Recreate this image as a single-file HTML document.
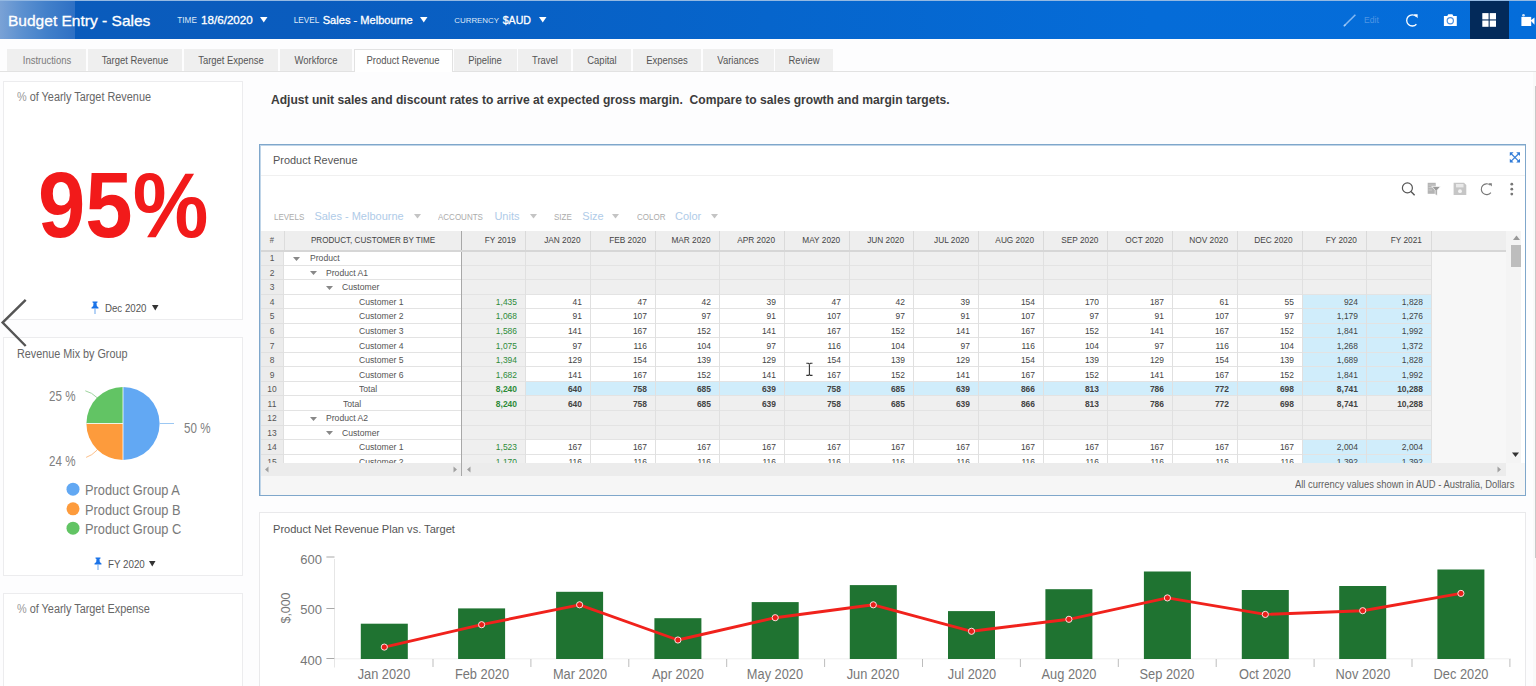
<!DOCTYPE html>
<html><head><meta charset="utf-8"><title>Budget Entry - Sales</title>
<style>
html,body{margin:0;padding:0;}
body{width:1536px;height:686px;overflow:hidden;position:relative;background:#fdfdfe;font-family:"Liberation Sans",sans-serif;color:#444;}
.t{position:absolute;white-space:nowrap;}
.b{position:absolute;box-sizing:border-box;}
svg{position:absolute;overflow:visible;}
</style></head><body>

<div class="b" style="left:0.00px;top:0.00px;width:1536.00px;height:39.00px;background:linear-gradient(90deg,#0a5bbb 0%,#0a5cbe 20%,#0665cc 50%,#056cd8 75%,#046dda 100%);"></div>
<div class="b" style="left:0.00px;top:1.00px;width:75.00px;height:38.00px;background:linear-gradient(90deg,#7aa2d6 0%,#5b90d0 30%,#4280ca 62%,#2e70c4 100%);"></div>
<div class="b" style="left:0.00px;top:0.00px;width:1536.00px;height:1.00px;background:#94b9e2;"></div>
<div class="t" style="left:7.80px;top:12.80px;font-size:15px;line-height:15px;transform:scaleX(1.035);transform-origin:0 0;color:#fff;-webkit-text-stroke:0.3px #fff;">Budget Entry - Sales</div>
<div class="t" style="left:177.30px;top:17.06px;font-size:8.2px;line-height:8.2px;color:#dfe9f7;">TIME</div>
<div class="t" style="left:201.30px;top:14.82px;font-size:11.2px;line-height:11.2px;transform:scaleX(1.04);transform-origin:0 0;color:#fff;-webkit-text-stroke:0.3px #fff;">18/6/2020</div>
<div class="t" style="left:293.80px;top:17.06px;font-size:8.2px;line-height:8.2px;color:#dfe9f7;">LEVEL</div>
<div class="t" style="left:322.70px;top:15.10px;font-size:11.1px;line-height:11.1px;color:#fff;-webkit-text-stroke:0.3px #fff;">Sales - Melbourne</div>
<div class="t" style="left:454.30px;top:17.31px;font-size:7.9px;line-height:7.9px;color:#dfe9f7;">CURRENCY</div>
<div class="t" style="left:502.70px;top:15.23px;font-size:10.6px;line-height:10.6px;color:#fff;-webkit-text-stroke:0.3px #fff;">$AUD</div>
<svg style="left:260px;top:17px" width="8" height="7"><path d="M0 0 L7.5 0 L3.75 5.6 Z" fill="#fff"/></svg>
<svg style="left:420px;top:17px" width="8" height="7"><path d="M0 0 L7.5 0 L3.75 5.6 Z" fill="#fff"/></svg>
<svg style="left:539px;top:17px" width="8" height="7"><path d="M0 0 L7.5 0 L3.75 5.6 Z" fill="#fff"/></svg>
<svg style="left:0;top:0" width="1536" height="40"><path d="M1344.8 25.3 L1355.4 14.7" stroke="#84b8f2" stroke-width="1.6" fill="none"/><path d="M1343.8 26.3 L1345.6 24.5" stroke="#a8cdf6" stroke-width="1.6"/><path d="M1416.2 16.4 A5.6 5.6 0 1 0 1416.4 24.2" stroke="#fff" stroke-width="1.3" fill="none"/><path d="M1413.8 14.3 L1417.6 14.3 L1417.6 18.3 Z" fill="#fff"/><path d="M1443.9 15.9 L1447.3 15.9 L1448.2 14.2 L1452.4 14.2 L1453.3 15.9 L1456.8 15.9 L1456.8 25.9 L1443.9 25.9 Z" fill="#fff"/><circle cx="1450.3" cy="20.7" r="3.7" fill="#4a90e2"/><circle cx="1450.3" cy="20.7" r="2.5" fill="#fff"/></svg>
<div class="t" style="left:1364.00px;top:15.72px;font-size:8.6px;line-height:8.6px;color:#4e95e4;">Edit</div>
<div class="b" style="left:1470.00px;top:1.00px;width:38.50px;height:37.50px;background:#032a5a;"></div>
<svg style="left:0;top:0" width="1536" height="40"><rect x="1482.3" y="13.1" width="6.3" height="6.3" fill="#fff"/><rect x="1489.7" y="13.1" width="6.3" height="6.3" fill="#fff"/><rect x="1482.3" y="20.5" width="6.3" height="6.3" fill="#fff"/><rect x="1489.7" y="20.5" width="6.3" height="6.3" fill="#fff"/><rect x="1521.4" y="16.9" width="9.8" height="9.1" fill="#fff"/><path d="M1530.5 20.5 L1534.5 17.5 L1534.5 24.8 Z" fill="#fff"/><circle cx="1523.5" cy="15.2" r="1.3" fill="#cfe2f8"/></svg>
<div class="b" style="left:0.00px;top:71.00px;width:1536.00px;height:1.00px;background:#e2e2e2;"></div>
<div class="b" style="left:7.00px;top:49.00px;width:79.00px;height:22.00px;background:#efefef;"></div>
<div class="t" style="left:-103.50px;width:300px;text-align:center;top:55.01px;font-size:10.5px;line-height:10.5px;transform:scaleX(0.9);transform-origin:50% 0;color:#7a7a7a;">Instructions</div>
<div class="b" style="left:87.50px;top:49.00px;width:94.00px;height:22.00px;background:#efefef;"></div>
<div class="t" style="left:-15.50px;width:300px;text-align:center;top:55.01px;font-size:10.5px;line-height:10.5px;transform:scaleX(0.9);transform-origin:50% 0;color:#555;">Target Revenue</div>
<div class="b" style="left:184.00px;top:49.00px;width:94.00px;height:22.00px;background:#efefef;"></div>
<div class="t" style="left:81.00px;width:300px;text-align:center;top:55.01px;font-size:10.5px;line-height:10.5px;transform:scaleX(0.9);transform-origin:50% 0;color:#555;">Target Expense</div>
<div class="b" style="left:279.50px;top:49.00px;width:72.00px;height:22.00px;background:#efefef;"></div>
<div class="t" style="left:165.50px;width:300px;text-align:center;top:55.01px;font-size:10.5px;line-height:10.5px;transform:scaleX(0.9);transform-origin:50% 0;color:#555;">Workforce</div>
<div class="b" style="left:353.50px;top:49.00px;width:99.00px;height:23.00px;background:#fff;border:1px solid #e2e2e2;border-bottom:none;"></div>
<div class="t" style="left:253.00px;width:300px;text-align:center;top:55.01px;font-size:10.5px;line-height:10.5px;transform:scaleX(0.9);transform-origin:50% 0;color:#555;">Product Revenue</div>
<div class="b" style="left:454.00px;top:49.00px;width:62.50px;height:22.00px;background:#efefef;"></div>
<div class="t" style="left:335.25px;width:300px;text-align:center;top:55.01px;font-size:10.5px;line-height:10.5px;transform:scaleX(0.9);transform-origin:50% 0;color:#555;">Pipeline</div>
<div class="b" style="left:518.00px;top:49.00px;width:53.00px;height:22.00px;background:#efefef;"></div>
<div class="t" style="left:394.50px;width:300px;text-align:center;top:55.01px;font-size:10.5px;line-height:10.5px;transform:scaleX(0.9);transform-origin:50% 0;color:#555;">Travel</div>
<div class="b" style="left:573.00px;top:49.00px;width:58.00px;height:22.00px;background:#efefef;"></div>
<div class="t" style="left:452.00px;width:300px;text-align:center;top:55.01px;font-size:10.5px;line-height:10.5px;transform:scaleX(0.9);transform-origin:50% 0;color:#555;">Capital</div>
<div class="b" style="left:632.50px;top:49.00px;width:68.50px;height:22.00px;background:#efefef;"></div>
<div class="t" style="left:516.75px;width:300px;text-align:center;top:55.01px;font-size:10.5px;line-height:10.5px;transform:scaleX(0.9);transform-origin:50% 0;color:#555;">Expenses</div>
<div class="b" style="left:703.00px;top:49.00px;width:70.50px;height:22.00px;background:#efefef;"></div>
<div class="t" style="left:588.25px;width:300px;text-align:center;top:55.01px;font-size:10.5px;line-height:10.5px;transform:scaleX(0.9);transform-origin:50% 0;color:#555;">Variances</div>
<div class="b" style="left:775.00px;top:49.00px;width:58.00px;height:22.00px;background:#efefef;"></div>
<div class="t" style="left:654.00px;width:300px;text-align:center;top:55.01px;font-size:10.5px;line-height:10.5px;transform:scaleX(0.9);transform-origin:50% 0;color:#555;">Review</div>
<div class="b" style="left:3.00px;top:81.00px;width:240.00px;height:239.00px;background:#fff;border:1px solid #ececee;"></div>
<div class="t" style="left:17.00px;top:91.04px;font-size:12px;line-height:12px;transform:scaleX(0.906);transform-origin:0 0;color:#666;"><span style="color:#999">%</span> of Yearly Target Revenue</div>
<div class="t" style="left:38.00px;top:157.85px;font-size:93.5px;line-height:93.5px;color:#f21a1a;font-weight:bold;transform:scaleX(0.91);transform-origin:0 0;">95%</div>
<svg style="left:91px;top:301px" width="8" height="14"><path d="M1.5 0.5 L6.5 0.5 L6.5 1.5 L5.5 2 L5.8 5 L7.5 6.5 L7.5 7.6 L0.5 7.6 L0.5 6.5 L2.2 5 L2.5 2 L1.5 1.5 Z" fill="#1a73e8"/><rect x="3.5" y="7.5" width="1" height="5.5" fill="#6aa6ee"/></svg>
<div class="t" style="left:105.20px;top:303.57px;font-size:10.2px;line-height:10.2px;transform:scaleX(0.95);transform-origin:0 0;color:#555;">Dec 2020</div>
<svg style="left:152px;top:305px" width="7" height="6"><path d="M0 0 L6.5 0 L3.25 5.5 Z" fill="#333"/></svg>
<div class="b" style="left:3.00px;top:337.00px;width:240.00px;height:239.00px;background:#fff;border:1px solid #ececee;"></div>
<div class="t" style="left:16.70px;top:347.64px;font-size:12px;line-height:12px;transform:scaleX(0.9);transform-origin:0 0;color:#666;">Revenue Mix by Group</div>
<svg style="left:0px;top:0px" width="250" height="600">
<path d="M123 423.5 L123 386.9 A36.6 36.6 0 0 1 123 460.1 Z" fill="#62a8f3"/>
<path d="M123 423.5 L123 460.1 A36.6 36.6 0 0 1 86.4 423.5 Z" fill="#fd9b3c"/>
<path d="M123 423.5 L86.4 423.5 A36.6 36.6 0 0 1 123 386.9 Z" fill="#62c464"/>
<path d="M123 386.9 L123 460.1 M86.4 423.5 L123 423.5" stroke="#fff" stroke-width="0.8"/>
<path d="M85.3 390.8 Q92 392.5 97 397.6" fill="none" stroke="#9fd59f" stroke-width="1"/>
<path d="M160 423.5 L174 423.5" fill="none" stroke="#9cc8f3" stroke-width="1"/>
<path d="M86.1 457.4 Q92 455.5 97 450.2" fill="none" stroke="#fdc08a" stroke-width="1"/>
<circle cx="73" cy="489.2" r="6.5" fill="#62a8f3"/>
<circle cx="73" cy="508.8" r="6.5" fill="#fd9b3c"/>
<circle cx="73" cy="528.2" r="6.5" fill="#62c464"/>
</svg>
<div class="t" style="left:49.20px;top:388.73px;font-size:14.5px;line-height:14.5px;transform:scaleX(0.8);transform-origin:0 0;color:#808080;">25 %</div>
<div class="t" style="left:183.80px;top:420.73px;font-size:14.5px;line-height:14.5px;transform:scaleX(0.8);transform-origin:0 0;color:#808080;">50 %</div>
<div class="t" style="left:49.20px;top:454.23px;font-size:14.5px;line-height:14.5px;transform:scaleX(0.8);transform-origin:0 0;color:#808080;">24 %</div>
<div class="t" style="left:85.00px;top:484.02px;font-size:13.8px;line-height:13.8px;transform:scaleX(0.93);transform-origin:0 0;color:#7a7a7a;">Product Group A</div>
<div class="t" style="left:85.00px;top:503.62px;font-size:13.8px;line-height:13.8px;transform:scaleX(0.93);transform-origin:0 0;color:#7a7a7a;">Product Group B</div>
<div class="t" style="left:85.00px;top:523.22px;font-size:13.8px;line-height:13.8px;transform:scaleX(0.93);transform-origin:0 0;color:#7a7a7a;">Product Group C</div>
<svg style="left:94px;top:557px" width="8" height="14"><path d="M1.5 0.5 L6.5 0.5 L6.5 1.5 L5.5 2 L5.8 5 L7.5 6.5 L7.5 7.6 L0.5 7.6 L0.5 6.5 L2.2 5 L2.5 2 L1.5 1.5 Z" fill="#1a73e8"/><rect x="3.5" y="7.5" width="1" height="5.5" fill="#6aa6ee"/></svg>
<div class="t" style="left:107.70px;top:559.77px;font-size:10.2px;line-height:10.2px;transform:scaleX(0.96);transform-origin:0 0;color:#555;">FY 2020</div>
<svg style="left:149px;top:561px" width="7" height="6"><path d="M0 0 L6.5 0 L3.25 5.5 Z" fill="#333"/></svg>
<div class="b" style="left:3.00px;top:593.00px;width:240.00px;height:107.00px;background:#fff;border:1px solid #ececee;"></div>
<div class="t" style="left:16.90px;top:603.04px;font-size:12px;line-height:12px;transform:scaleX(0.906);transform-origin:0 0;color:#666;"><span style="color:#999">%</span> of Yearly Target Expense</div>
<svg style="left:0px;top:295px" width="30" height="56"><path d="M25.7 4.8 L2.6 27.6 L25.7 51" fill="none" stroke="#555" stroke-width="2.4"/></svg>
<div class="t" style="left:271.40px;top:93.63px;font-size:12.6px;line-height:12.6px;transform:scaleX(0.96);transform-origin:0 0;color:#3c3c3c;font-weight:bold;">Adjust unit sales and discount rates to arrive at expected gross margin.&nbsp; Compare to sales growth and margin targets.</div>
<div class="b" style="left:259.00px;top:143.50px;width:1267.00px;height:352.50px;background:#fff;border:1px solid #7fa7cb;box-shadow:inset 1px 1px 0 #c0d5e8;"></div>
<div class="b" style="left:260.50px;top:175.00px;width:1264.50px;height:1.00px;background:#f0f0f0;"></div>
<div class="t" style="left:273.00px;top:155.21px;font-size:11.8px;line-height:11.8px;transform:scaleX(0.927);transform-origin:0 0;color:#555;">Product Revenue</div>
<svg style="left:0;top:0" width="1536" height="686"><path d="M1511.2 153.7 L1518.6 161.1 M1518.6 153.7 L1511.2 161.1" stroke="#3d83da" stroke-width="1.3"/><path d="M1509.8 152.3 L1513.6 152.3 L1509.8 156.1 Z M1520 152.3 L1516.2 152.3 L1520 156.1 Z M1509.8 162.5 L1513.6 162.5 L1509.8 158.7 Z M1520 162.5 L1516.2 162.5 L1520 158.7 Z" fill="#2f7bd8"/><circle cx="1407.4" cy="187.9" r="5" fill="none" stroke="#555" stroke-width="1.2"/><path d="M1411 191.6 L1414.6 195.2" stroke="#555" stroke-width="1.4"/><rect x="1427.7" y="182.8" width="8" height="11" fill="#b4b4b4"/><path d="M1428.5 185 L1435 185 M1428.5 187.5 L1435 187.5 M1428.5 190 L1432 190" stroke="#d8d8d8" stroke-width="0.6"/><path d="M1431.8 186.4 L1440.6 186.4 L1437.2 190.2 L1437.2 195.5 L1435.2 194.5 L1435.2 190.2 Z" fill="#9a9a9a" stroke="#fff" stroke-width="0.7"/><path d="M1453.6 182.8 L1464 182.8 L1466.3 185.1 L1466.3 195.1 L1453.6 195.1 Z" fill="#c6c6c6"/><rect x="1456" y="184" width="7.5" height="3.4" fill="#e9e9e9"/><circle cx="1460" cy="191.2" r="1.9" fill="#f4f4f4"/><path d="M1490.3 185.2 A5.4 5.4 0 1 0 1490.9 192.6" fill="none" stroke="#777" stroke-width="1.1"/><path d="M1488.6 183.2 L1491.8 183.2 L1491.8 186.6 Z" fill="#777"/><circle cx="1511.8" cy="184.2" r="1.4" fill="#777"/><circle cx="1511.8" cy="189.2" r="1.4" fill="#777"/><circle cx="1511.8" cy="194.1" r="1.4" fill="#777"/></svg>
<div class="t" style="left:273.70px;top:212.58px;font-size:9px;line-height:9px;transform:scaleX(0.888888888888889);transform-origin:0 0;color:#ababab;">LEVELS</div>
<div class="t" style="left:314.40px;top:210.89px;font-size:11px;line-height:11px;color:#afcbe8;">Sales - Melbourne</div>
<svg style="left:413.5px;top:214px" width="8" height="5"><path d="M0 0 L7 0 L3.5 4.5 Z" fill="#c4c4c4"/></svg>
<div class="t" style="left:438.40px;top:212.58px;font-size:9px;line-height:9px;transform:scaleX(0.8888888888888888);transform-origin:0 0;color:#ababab;">ACCOUNTS</div>
<div class="t" style="left:494.40px;top:210.89px;font-size:11px;line-height:11px;color:#afcbe8;">Units</div>
<svg style="left:529.9px;top:214px" width="8" height="5"><path d="M0 0 L7 0 L3.5 4.5 Z" fill="#c4c4c4"/></svg>
<div class="t" style="left:554.00px;top:212.58px;font-size:9px;line-height:9px;transform:scaleX(0.8888888888888888);transform-origin:0 0;color:#ababab;">SIZE</div>
<div class="t" style="left:582.30px;top:210.89px;font-size:11px;line-height:11px;color:#afcbe8;">Size</div>
<svg style="left:612.3px;top:214px" width="8" height="5"><path d="M0 0 L7 0 L3.5 4.5 Z" fill="#c4c4c4"/></svg>
<div class="t" style="left:636.60px;top:212.58px;font-size:9px;line-height:9px;transform:scaleX(0.8888888888888888);transform-origin:0 0;color:#ababab;">COLOR</div>
<div class="t" style="left:675.00px;top:210.89px;font-size:11px;line-height:11px;color:#afcbe8;">Color</div>
<svg style="left:711.3px;top:214px" width="8" height="5"><path d="M0 0 L7 0 L3.5 4.5 Z" fill="#c4c4c4"/></svg>
<div class="b" style="left:1432.00px;top:250.50px;width:74.00px;height:212.70px;background:#f7f7f7;"></div>
<div class="b" style="left:260.50px;top:231.00px;width:1245.50px;height:19.00px;background:#eeeeee;"></div>
<div class="b" style="left:283.50px;top:231.00px;width:1.00px;height:19.50px;background:#dcdcdc;"></div>
<div class="b" style="left:461.00px;top:231.00px;width:1.00px;height:19.50px;background:#a8a8a8;"></div>
<div class="b" style="left:525.00px;top:231.00px;width:1.00px;height:19.50px;background:#dadada;"></div>
<div class="b" style="left:590.00px;top:231.00px;width:1.00px;height:19.50px;background:#dadada;"></div>
<div class="b" style="left:655.00px;top:231.00px;width:1.00px;height:19.50px;background:#dadada;"></div>
<div class="b" style="left:719.00px;top:231.00px;width:1.00px;height:19.50px;background:#dadada;"></div>
<div class="b" style="left:784.00px;top:231.00px;width:1.00px;height:19.50px;background:#dadada;"></div>
<div class="b" style="left:849.00px;top:231.00px;width:1.00px;height:19.50px;background:#dadada;"></div>
<div class="b" style="left:913.00px;top:231.00px;width:1.00px;height:19.50px;background:#dadada;"></div>
<div class="b" style="left:978.00px;top:231.00px;width:1.00px;height:19.50px;background:#dadada;"></div>
<div class="b" style="left:1043.00px;top:231.00px;width:1.00px;height:19.50px;background:#dadada;"></div>
<div class="b" style="left:1107.00px;top:231.00px;width:1.00px;height:19.50px;background:#dadada;"></div>
<div class="b" style="left:1172.00px;top:231.00px;width:1.00px;height:19.50px;background:#dadada;"></div>
<div class="b" style="left:1237.00px;top:231.00px;width:1.00px;height:19.50px;background:#dadada;"></div>
<div class="b" style="left:1302.00px;top:231.00px;width:1.00px;height:19.50px;background:#dadada;"></div>
<div class="b" style="left:1366.00px;top:231.00px;width:1.00px;height:19.50px;background:#dadada;"></div>
<div class="b" style="left:1431.00px;top:231.00px;width:1.00px;height:19.50px;background:#dadada;"></div>
<div class="t" style="left:121.70px;width:300px;text-align:center;top:236.00px;font-size:8.5px;line-height:8.5px;transform:scaleX(0.9);transform-origin:50% 0;color:#555;">#</div>
<div class="t" style="left:223.00px;width:300px;text-align:center;top:235.78px;font-size:9px;line-height:9px;transform:scaleX(0.9);transform-origin:50% 0;color:#444;">PRODUCT, CUSTOMER BY TIME</div>
<div class="t" style="right:1019.80px;top:235.78px;font-size:9px;line-height:9px;text-align:right;transform:scaleX(0.92);transform-origin:100% 0;color:#444;">FY 2019</div>
<div class="t" style="right:955.10px;top:235.78px;font-size:9px;line-height:9px;text-align:right;transform:scaleX(0.92);transform-origin:100% 0;color:#444;">JAN 2020</div>
<div class="t" style="right:890.40px;top:235.78px;font-size:9px;line-height:9px;text-align:right;transform:scaleX(0.92);transform-origin:100% 0;color:#444;">FEB 2020</div>
<div class="t" style="right:825.70px;top:235.78px;font-size:9px;line-height:9px;text-align:right;transform:scaleX(0.92);transform-origin:100% 0;color:#444;">MAR 2020</div>
<div class="t" style="right:761.00px;top:235.78px;font-size:9px;line-height:9px;text-align:right;transform:scaleX(0.92);transform-origin:100% 0;color:#444;">APR 2020</div>
<div class="t" style="right:696.30px;top:235.78px;font-size:9px;line-height:9px;text-align:right;transform:scaleX(0.92);transform-origin:100% 0;color:#444;">MAY 2020</div>
<div class="t" style="right:631.60px;top:235.78px;font-size:9px;line-height:9px;text-align:right;transform:scaleX(0.92);transform-origin:100% 0;color:#444;">JUN 2020</div>
<div class="t" style="right:566.90px;top:235.78px;font-size:9px;line-height:9px;text-align:right;transform:scaleX(0.92);transform-origin:100% 0;color:#444;">JUL 2020</div>
<div class="t" style="right:502.20px;top:235.78px;font-size:9px;line-height:9px;text-align:right;transform:scaleX(0.92);transform-origin:100% 0;color:#444;">AUG 2020</div>
<div class="t" style="right:437.50px;top:235.78px;font-size:9px;line-height:9px;text-align:right;transform:scaleX(0.92);transform-origin:100% 0;color:#444;">SEP 2020</div>
<div class="t" style="right:372.80px;top:235.78px;font-size:9px;line-height:9px;text-align:right;transform:scaleX(0.92);transform-origin:100% 0;color:#444;">OCT 2020</div>
<div class="t" style="right:308.10px;top:235.78px;font-size:9px;line-height:9px;text-align:right;transform:scaleX(0.92);transform-origin:100% 0;color:#444;">NOV 2020</div>
<div class="t" style="right:243.40px;top:235.78px;font-size:9px;line-height:9px;text-align:right;transform:scaleX(0.92);transform-origin:100% 0;color:#444;">DEC 2020</div>
<div class="t" style="right:178.70px;top:235.78px;font-size:9px;line-height:9px;text-align:right;transform:scaleX(0.92);transform-origin:100% 0;color:#444;">FY 2020</div>
<div class="t" style="right:114.00px;top:235.78px;font-size:9px;line-height:9px;text-align:right;transform:scaleX(0.92);transform-origin:100% 0;color:#444;">FY 2021</div>
<div class="b" style="left:260.5px;top:250.5px;width:1245.5px;height:212.7px;overflow:hidden;">
<div class="b" style="left:0.00px;top:0.50px;width:23.00px;height:15.00px;background:#ececec;"></div>
<div class="b" style="left:23.00px;top:0.50px;width:178.50px;height:15.00px;background:#fff;"></div>
<div class="b" style="left:201.50px;top:0.50px;width:64.00px;height:15.00px;background:#efefef;"></div>
<div class="b" style="left:265.50px;top:0.50px;width:65.00px;height:15.00px;background:#efefef;"></div>
<div class="b" style="left:330.50px;top:0.50px;width:65.00px;height:15.00px;background:#efefef;"></div>
<div class="b" style="left:395.50px;top:0.50px;width:64.00px;height:15.00px;background:#efefef;"></div>
<div class="b" style="left:459.50px;top:0.50px;width:65.00px;height:15.00px;background:#efefef;"></div>
<div class="b" style="left:524.50px;top:0.50px;width:65.00px;height:15.00px;background:#efefef;"></div>
<div class="b" style="left:589.50px;top:0.50px;width:64.00px;height:15.00px;background:#efefef;"></div>
<div class="b" style="left:653.50px;top:0.50px;width:65.00px;height:15.00px;background:#efefef;"></div>
<div class="b" style="left:718.50px;top:0.50px;width:65.00px;height:15.00px;background:#efefef;"></div>
<div class="b" style="left:783.50px;top:0.50px;width:64.00px;height:15.00px;background:#efefef;"></div>
<div class="b" style="left:847.50px;top:0.50px;width:65.00px;height:15.00px;background:#efefef;"></div>
<div class="b" style="left:912.50px;top:0.50px;width:65.00px;height:15.00px;background:#efefef;"></div>
<div class="b" style="left:977.50px;top:0.50px;width:65.00px;height:15.00px;background:#efefef;"></div>
<div class="b" style="left:1042.50px;top:0.50px;width:64.00px;height:15.00px;background:#efefef;"></div>
<div class="b" style="left:1106.50px;top:0.50px;width:65.00px;height:15.00px;background:#efefef;"></div>
<div class="b" style="left:0.00px;top:14.50px;width:23.00px;height:1.00px;background:#e0e0e0;"></div>
<div class="b" style="left:23.00px;top:14.50px;width:1148.50px;height:1.00px;background:#e3e3e3;"></div>
<div class="b" style="left:0.00px;top:15.50px;width:23.00px;height:14.00px;background:#ececec;"></div>
<div class="b" style="left:23.00px;top:15.50px;width:178.50px;height:14.00px;background:#fff;"></div>
<div class="b" style="left:201.50px;top:15.50px;width:64.00px;height:14.00px;background:#efefef;"></div>
<div class="b" style="left:265.50px;top:15.50px;width:65.00px;height:14.00px;background:#efefef;"></div>
<div class="b" style="left:330.50px;top:15.50px;width:65.00px;height:14.00px;background:#efefef;"></div>
<div class="b" style="left:395.50px;top:15.50px;width:64.00px;height:14.00px;background:#efefef;"></div>
<div class="b" style="left:459.50px;top:15.50px;width:65.00px;height:14.00px;background:#efefef;"></div>
<div class="b" style="left:524.50px;top:15.50px;width:65.00px;height:14.00px;background:#efefef;"></div>
<div class="b" style="left:589.50px;top:15.50px;width:64.00px;height:14.00px;background:#efefef;"></div>
<div class="b" style="left:653.50px;top:15.50px;width:65.00px;height:14.00px;background:#efefef;"></div>
<div class="b" style="left:718.50px;top:15.50px;width:65.00px;height:14.00px;background:#efefef;"></div>
<div class="b" style="left:783.50px;top:15.50px;width:64.00px;height:14.00px;background:#efefef;"></div>
<div class="b" style="left:847.50px;top:15.50px;width:65.00px;height:14.00px;background:#efefef;"></div>
<div class="b" style="left:912.50px;top:15.50px;width:65.00px;height:14.00px;background:#efefef;"></div>
<div class="b" style="left:977.50px;top:15.50px;width:65.00px;height:14.00px;background:#efefef;"></div>
<div class="b" style="left:1042.50px;top:15.50px;width:64.00px;height:14.00px;background:#efefef;"></div>
<div class="b" style="left:1106.50px;top:15.50px;width:65.00px;height:14.00px;background:#efefef;"></div>
<div class="b" style="left:0.00px;top:28.50px;width:23.00px;height:1.00px;background:#e0e0e0;"></div>
<div class="b" style="left:23.00px;top:28.50px;width:1148.50px;height:1.00px;background:#e3e3e3;"></div>
<div class="b" style="left:0.00px;top:29.50px;width:23.00px;height:15.00px;background:#ececec;"></div>
<div class="b" style="left:23.00px;top:29.50px;width:178.50px;height:15.00px;background:#fff;"></div>
<div class="b" style="left:201.50px;top:29.50px;width:64.00px;height:15.00px;background:#efefef;"></div>
<div class="b" style="left:265.50px;top:29.50px;width:65.00px;height:15.00px;background:#efefef;"></div>
<div class="b" style="left:330.50px;top:29.50px;width:65.00px;height:15.00px;background:#efefef;"></div>
<div class="b" style="left:395.50px;top:29.50px;width:64.00px;height:15.00px;background:#efefef;"></div>
<div class="b" style="left:459.50px;top:29.50px;width:65.00px;height:15.00px;background:#efefef;"></div>
<div class="b" style="left:524.50px;top:29.50px;width:65.00px;height:15.00px;background:#efefef;"></div>
<div class="b" style="left:589.50px;top:29.50px;width:64.00px;height:15.00px;background:#efefef;"></div>
<div class="b" style="left:653.50px;top:29.50px;width:65.00px;height:15.00px;background:#efefef;"></div>
<div class="b" style="left:718.50px;top:29.50px;width:65.00px;height:15.00px;background:#efefef;"></div>
<div class="b" style="left:783.50px;top:29.50px;width:64.00px;height:15.00px;background:#efefef;"></div>
<div class="b" style="left:847.50px;top:29.50px;width:65.00px;height:15.00px;background:#efefef;"></div>
<div class="b" style="left:912.50px;top:29.50px;width:65.00px;height:15.00px;background:#efefef;"></div>
<div class="b" style="left:977.50px;top:29.50px;width:65.00px;height:15.00px;background:#efefef;"></div>
<div class="b" style="left:1042.50px;top:29.50px;width:64.00px;height:15.00px;background:#efefef;"></div>
<div class="b" style="left:1106.50px;top:29.50px;width:65.00px;height:15.00px;background:#efefef;"></div>
<div class="b" style="left:0.00px;top:43.50px;width:23.00px;height:1.00px;background:#e0e0e0;"></div>
<div class="b" style="left:23.00px;top:43.50px;width:1148.50px;height:1.00px;background:#e3e3e3;"></div>
<div class="b" style="left:0.00px;top:44.50px;width:23.00px;height:14.00px;background:#ececec;"></div>
<div class="b" style="left:23.00px;top:44.50px;width:178.50px;height:14.00px;background:#fff;"></div>
<div class="b" style="left:201.50px;top:44.50px;width:64.00px;height:14.00px;background:#efefef;"></div>
<div class="b" style="left:265.50px;top:44.50px;width:65.00px;height:14.00px;background:#fff;"></div>
<div class="b" style="left:330.50px;top:44.50px;width:65.00px;height:14.00px;background:#fff;"></div>
<div class="b" style="left:395.50px;top:44.50px;width:64.00px;height:14.00px;background:#fff;"></div>
<div class="b" style="left:459.50px;top:44.50px;width:65.00px;height:14.00px;background:#fff;"></div>
<div class="b" style="left:524.50px;top:44.50px;width:65.00px;height:14.00px;background:#fff;"></div>
<div class="b" style="left:589.50px;top:44.50px;width:64.00px;height:14.00px;background:#fff;"></div>
<div class="b" style="left:653.50px;top:44.50px;width:65.00px;height:14.00px;background:#fff;"></div>
<div class="b" style="left:718.50px;top:44.50px;width:65.00px;height:14.00px;background:#fff;"></div>
<div class="b" style="left:783.50px;top:44.50px;width:64.00px;height:14.00px;background:#fff;"></div>
<div class="b" style="left:847.50px;top:44.50px;width:65.00px;height:14.00px;background:#fff;"></div>
<div class="b" style="left:912.50px;top:44.50px;width:65.00px;height:14.00px;background:#fff;"></div>
<div class="b" style="left:977.50px;top:44.50px;width:65.00px;height:14.00px;background:#fff;"></div>
<div class="b" style="left:1042.50px;top:44.50px;width:64.00px;height:14.00px;background:#d0edfb;"></div>
<div class="b" style="left:1106.50px;top:44.50px;width:65.00px;height:14.00px;background:#d0edfb;"></div>
<div class="b" style="left:0.00px;top:57.50px;width:23.00px;height:1.00px;background:#e0e0e0;"></div>
<div class="b" style="left:23.00px;top:57.50px;width:1148.50px;height:1.00px;background:#e3e3e3;"></div>
<div class="b" style="left:0.00px;top:58.50px;width:23.00px;height:15.00px;background:#ececec;"></div>
<div class="b" style="left:23.00px;top:58.50px;width:178.50px;height:15.00px;background:#fff;"></div>
<div class="b" style="left:201.50px;top:58.50px;width:64.00px;height:15.00px;background:#efefef;"></div>
<div class="b" style="left:265.50px;top:58.50px;width:65.00px;height:15.00px;background:#fff;"></div>
<div class="b" style="left:330.50px;top:58.50px;width:65.00px;height:15.00px;background:#fff;"></div>
<div class="b" style="left:395.50px;top:58.50px;width:64.00px;height:15.00px;background:#fff;"></div>
<div class="b" style="left:459.50px;top:58.50px;width:65.00px;height:15.00px;background:#fff;"></div>
<div class="b" style="left:524.50px;top:58.50px;width:65.00px;height:15.00px;background:#fff;"></div>
<div class="b" style="left:589.50px;top:58.50px;width:64.00px;height:15.00px;background:#fff;"></div>
<div class="b" style="left:653.50px;top:58.50px;width:65.00px;height:15.00px;background:#fff;"></div>
<div class="b" style="left:718.50px;top:58.50px;width:65.00px;height:15.00px;background:#fff;"></div>
<div class="b" style="left:783.50px;top:58.50px;width:64.00px;height:15.00px;background:#fff;"></div>
<div class="b" style="left:847.50px;top:58.50px;width:65.00px;height:15.00px;background:#fff;"></div>
<div class="b" style="left:912.50px;top:58.50px;width:65.00px;height:15.00px;background:#fff;"></div>
<div class="b" style="left:977.50px;top:58.50px;width:65.00px;height:15.00px;background:#fff;"></div>
<div class="b" style="left:1042.50px;top:58.50px;width:64.00px;height:15.00px;background:#d0edfb;"></div>
<div class="b" style="left:1106.50px;top:58.50px;width:65.00px;height:15.00px;background:#d0edfb;"></div>
<div class="b" style="left:0.00px;top:72.50px;width:23.00px;height:1.00px;background:#e0e0e0;"></div>
<div class="b" style="left:23.00px;top:72.50px;width:1148.50px;height:1.00px;background:#e3e3e3;"></div>
<div class="b" style="left:0.00px;top:73.50px;width:23.00px;height:14.00px;background:#ececec;"></div>
<div class="b" style="left:23.00px;top:73.50px;width:178.50px;height:14.00px;background:#fff;"></div>
<div class="b" style="left:201.50px;top:73.50px;width:64.00px;height:14.00px;background:#efefef;"></div>
<div class="b" style="left:265.50px;top:73.50px;width:65.00px;height:14.00px;background:#fff;"></div>
<div class="b" style="left:330.50px;top:73.50px;width:65.00px;height:14.00px;background:#fff;"></div>
<div class="b" style="left:395.50px;top:73.50px;width:64.00px;height:14.00px;background:#fff;"></div>
<div class="b" style="left:459.50px;top:73.50px;width:65.00px;height:14.00px;background:#fff;"></div>
<div class="b" style="left:524.50px;top:73.50px;width:65.00px;height:14.00px;background:#fff;"></div>
<div class="b" style="left:589.50px;top:73.50px;width:64.00px;height:14.00px;background:#fff;"></div>
<div class="b" style="left:653.50px;top:73.50px;width:65.00px;height:14.00px;background:#fff;"></div>
<div class="b" style="left:718.50px;top:73.50px;width:65.00px;height:14.00px;background:#fff;"></div>
<div class="b" style="left:783.50px;top:73.50px;width:64.00px;height:14.00px;background:#fff;"></div>
<div class="b" style="left:847.50px;top:73.50px;width:65.00px;height:14.00px;background:#fff;"></div>
<div class="b" style="left:912.50px;top:73.50px;width:65.00px;height:14.00px;background:#fff;"></div>
<div class="b" style="left:977.50px;top:73.50px;width:65.00px;height:14.00px;background:#fff;"></div>
<div class="b" style="left:1042.50px;top:73.50px;width:64.00px;height:14.00px;background:#d0edfb;"></div>
<div class="b" style="left:1106.50px;top:73.50px;width:65.00px;height:14.00px;background:#d0edfb;"></div>
<div class="b" style="left:0.00px;top:86.50px;width:23.00px;height:1.00px;background:#e0e0e0;"></div>
<div class="b" style="left:23.00px;top:86.50px;width:1148.50px;height:1.00px;background:#e3e3e3;"></div>
<div class="b" style="left:0.00px;top:87.50px;width:23.00px;height:15.00px;background:#ececec;"></div>
<div class="b" style="left:23.00px;top:87.50px;width:178.50px;height:15.00px;background:#fff;"></div>
<div class="b" style="left:201.50px;top:87.50px;width:64.00px;height:15.00px;background:#efefef;"></div>
<div class="b" style="left:265.50px;top:87.50px;width:65.00px;height:15.00px;background:#fff;"></div>
<div class="b" style="left:330.50px;top:87.50px;width:65.00px;height:15.00px;background:#fff;"></div>
<div class="b" style="left:395.50px;top:87.50px;width:64.00px;height:15.00px;background:#fff;"></div>
<div class="b" style="left:459.50px;top:87.50px;width:65.00px;height:15.00px;background:#fff;"></div>
<div class="b" style="left:524.50px;top:87.50px;width:65.00px;height:15.00px;background:#fff;"></div>
<div class="b" style="left:589.50px;top:87.50px;width:64.00px;height:15.00px;background:#fff;"></div>
<div class="b" style="left:653.50px;top:87.50px;width:65.00px;height:15.00px;background:#fff;"></div>
<div class="b" style="left:718.50px;top:87.50px;width:65.00px;height:15.00px;background:#fff;"></div>
<div class="b" style="left:783.50px;top:87.50px;width:64.00px;height:15.00px;background:#fff;"></div>
<div class="b" style="left:847.50px;top:87.50px;width:65.00px;height:15.00px;background:#fff;"></div>
<div class="b" style="left:912.50px;top:87.50px;width:65.00px;height:15.00px;background:#fff;"></div>
<div class="b" style="left:977.50px;top:87.50px;width:65.00px;height:15.00px;background:#fff;"></div>
<div class="b" style="left:1042.50px;top:87.50px;width:64.00px;height:15.00px;background:#d0edfb;"></div>
<div class="b" style="left:1106.50px;top:87.50px;width:65.00px;height:15.00px;background:#d0edfb;"></div>
<div class="b" style="left:0.00px;top:101.50px;width:23.00px;height:1.00px;background:#e0e0e0;"></div>
<div class="b" style="left:23.00px;top:101.50px;width:1148.50px;height:1.00px;background:#e3e3e3;"></div>
<div class="b" style="left:0.00px;top:102.50px;width:23.00px;height:14.00px;background:#ececec;"></div>
<div class="b" style="left:23.00px;top:102.50px;width:178.50px;height:14.00px;background:#fff;"></div>
<div class="b" style="left:201.50px;top:102.50px;width:64.00px;height:14.00px;background:#efefef;"></div>
<div class="b" style="left:265.50px;top:102.50px;width:65.00px;height:14.00px;background:#fff;"></div>
<div class="b" style="left:330.50px;top:102.50px;width:65.00px;height:14.00px;background:#fff;"></div>
<div class="b" style="left:395.50px;top:102.50px;width:64.00px;height:14.00px;background:#fff;"></div>
<div class="b" style="left:459.50px;top:102.50px;width:65.00px;height:14.00px;background:#fff;"></div>
<div class="b" style="left:524.50px;top:102.50px;width:65.00px;height:14.00px;background:#fff;"></div>
<div class="b" style="left:589.50px;top:102.50px;width:64.00px;height:14.00px;background:#fff;"></div>
<div class="b" style="left:653.50px;top:102.50px;width:65.00px;height:14.00px;background:#fff;"></div>
<div class="b" style="left:718.50px;top:102.50px;width:65.00px;height:14.00px;background:#fff;"></div>
<div class="b" style="left:783.50px;top:102.50px;width:64.00px;height:14.00px;background:#fff;"></div>
<div class="b" style="left:847.50px;top:102.50px;width:65.00px;height:14.00px;background:#fff;"></div>
<div class="b" style="left:912.50px;top:102.50px;width:65.00px;height:14.00px;background:#fff;"></div>
<div class="b" style="left:977.50px;top:102.50px;width:65.00px;height:14.00px;background:#fff;"></div>
<div class="b" style="left:1042.50px;top:102.50px;width:64.00px;height:14.00px;background:#d0edfb;"></div>
<div class="b" style="left:1106.50px;top:102.50px;width:65.00px;height:14.00px;background:#d0edfb;"></div>
<div class="b" style="left:0.00px;top:115.50px;width:23.00px;height:1.00px;background:#e0e0e0;"></div>
<div class="b" style="left:23.00px;top:115.50px;width:1148.50px;height:1.00px;background:#e3e3e3;"></div>
<div class="b" style="left:0.00px;top:116.50px;width:23.00px;height:15.00px;background:#ececec;"></div>
<div class="b" style="left:23.00px;top:116.50px;width:178.50px;height:15.00px;background:#fff;"></div>
<div class="b" style="left:201.50px;top:116.50px;width:64.00px;height:15.00px;background:#efefef;"></div>
<div class="b" style="left:265.50px;top:116.50px;width:65.00px;height:15.00px;background:#fff;"></div>
<div class="b" style="left:330.50px;top:116.50px;width:65.00px;height:15.00px;background:#fff;"></div>
<div class="b" style="left:395.50px;top:116.50px;width:64.00px;height:15.00px;background:#fff;"></div>
<div class="b" style="left:459.50px;top:116.50px;width:65.00px;height:15.00px;background:#fff;"></div>
<div class="b" style="left:524.50px;top:116.50px;width:65.00px;height:15.00px;background:#fff;"></div>
<div class="b" style="left:589.50px;top:116.50px;width:64.00px;height:15.00px;background:#fff;"></div>
<div class="b" style="left:653.50px;top:116.50px;width:65.00px;height:15.00px;background:#fff;"></div>
<div class="b" style="left:718.50px;top:116.50px;width:65.00px;height:15.00px;background:#fff;"></div>
<div class="b" style="left:783.50px;top:116.50px;width:64.00px;height:15.00px;background:#fff;"></div>
<div class="b" style="left:847.50px;top:116.50px;width:65.00px;height:15.00px;background:#fff;"></div>
<div class="b" style="left:912.50px;top:116.50px;width:65.00px;height:15.00px;background:#fff;"></div>
<div class="b" style="left:977.50px;top:116.50px;width:65.00px;height:15.00px;background:#fff;"></div>
<div class="b" style="left:1042.50px;top:116.50px;width:64.00px;height:15.00px;background:#d0edfb;"></div>
<div class="b" style="left:1106.50px;top:116.50px;width:65.00px;height:15.00px;background:#d0edfb;"></div>
<div class="b" style="left:0.00px;top:130.50px;width:23.00px;height:1.00px;background:#e0e0e0;"></div>
<div class="b" style="left:23.00px;top:130.50px;width:1148.50px;height:1.00px;background:#e3e3e3;"></div>
<div class="b" style="left:0.00px;top:131.50px;width:23.00px;height:14.00px;background:#ececec;"></div>
<div class="b" style="left:23.00px;top:131.50px;width:178.50px;height:14.00px;background:#fff;"></div>
<div class="b" style="left:201.50px;top:131.50px;width:64.00px;height:14.00px;background:#efefef;"></div>
<div class="b" style="left:265.50px;top:131.50px;width:65.00px;height:14.00px;background:#d0edfb;"></div>
<div class="b" style="left:330.50px;top:131.50px;width:65.00px;height:14.00px;background:#d0edfb;"></div>
<div class="b" style="left:395.50px;top:131.50px;width:64.00px;height:14.00px;background:#d0edfb;"></div>
<div class="b" style="left:459.50px;top:131.50px;width:65.00px;height:14.00px;background:#d0edfb;"></div>
<div class="b" style="left:524.50px;top:131.50px;width:65.00px;height:14.00px;background:#d0edfb;"></div>
<div class="b" style="left:589.50px;top:131.50px;width:64.00px;height:14.00px;background:#d0edfb;"></div>
<div class="b" style="left:653.50px;top:131.50px;width:65.00px;height:14.00px;background:#d0edfb;"></div>
<div class="b" style="left:718.50px;top:131.50px;width:65.00px;height:14.00px;background:#d0edfb;"></div>
<div class="b" style="left:783.50px;top:131.50px;width:64.00px;height:14.00px;background:#d0edfb;"></div>
<div class="b" style="left:847.50px;top:131.50px;width:65.00px;height:14.00px;background:#d0edfb;"></div>
<div class="b" style="left:912.50px;top:131.50px;width:65.00px;height:14.00px;background:#d0edfb;"></div>
<div class="b" style="left:977.50px;top:131.50px;width:65.00px;height:14.00px;background:#d0edfb;"></div>
<div class="b" style="left:1042.50px;top:131.50px;width:64.00px;height:14.00px;background:#d0edfb;"></div>
<div class="b" style="left:1106.50px;top:131.50px;width:65.00px;height:14.00px;background:#d0edfb;"></div>
<div class="b" style="left:0.00px;top:144.50px;width:23.00px;height:1.00px;background:#e0e0e0;"></div>
<div class="b" style="left:23.00px;top:144.50px;width:1148.50px;height:1.00px;background:#e3e3e3;"></div>
<div class="b" style="left:0.00px;top:145.50px;width:23.00px;height:15.00px;background:#ececec;"></div>
<div class="b" style="left:23.00px;top:145.50px;width:178.50px;height:15.00px;background:#fff;"></div>
<div class="b" style="left:201.50px;top:145.50px;width:64.00px;height:15.00px;background:#efefef;"></div>
<div class="b" style="left:265.50px;top:145.50px;width:65.00px;height:15.00px;background:#efefef;"></div>
<div class="b" style="left:330.50px;top:145.50px;width:65.00px;height:15.00px;background:#efefef;"></div>
<div class="b" style="left:395.50px;top:145.50px;width:64.00px;height:15.00px;background:#efefef;"></div>
<div class="b" style="left:459.50px;top:145.50px;width:65.00px;height:15.00px;background:#efefef;"></div>
<div class="b" style="left:524.50px;top:145.50px;width:65.00px;height:15.00px;background:#efefef;"></div>
<div class="b" style="left:589.50px;top:145.50px;width:64.00px;height:15.00px;background:#efefef;"></div>
<div class="b" style="left:653.50px;top:145.50px;width:65.00px;height:15.00px;background:#efefef;"></div>
<div class="b" style="left:718.50px;top:145.50px;width:65.00px;height:15.00px;background:#efefef;"></div>
<div class="b" style="left:783.50px;top:145.50px;width:64.00px;height:15.00px;background:#efefef;"></div>
<div class="b" style="left:847.50px;top:145.50px;width:65.00px;height:15.00px;background:#efefef;"></div>
<div class="b" style="left:912.50px;top:145.50px;width:65.00px;height:15.00px;background:#efefef;"></div>
<div class="b" style="left:977.50px;top:145.50px;width:65.00px;height:15.00px;background:#efefef;"></div>
<div class="b" style="left:1042.50px;top:145.50px;width:64.00px;height:15.00px;background:#efefef;"></div>
<div class="b" style="left:1106.50px;top:145.50px;width:65.00px;height:15.00px;background:#efefef;"></div>
<div class="b" style="left:0.00px;top:159.50px;width:23.00px;height:1.00px;background:#e0e0e0;"></div>
<div class="b" style="left:23.00px;top:159.50px;width:1148.50px;height:1.00px;background:#e3e3e3;"></div>
<div class="b" style="left:0.00px;top:160.50px;width:23.00px;height:15.00px;background:#ececec;"></div>
<div class="b" style="left:23.00px;top:160.50px;width:178.50px;height:15.00px;background:#fff;"></div>
<div class="b" style="left:201.50px;top:160.50px;width:64.00px;height:15.00px;background:#efefef;"></div>
<div class="b" style="left:265.50px;top:160.50px;width:65.00px;height:15.00px;background:#efefef;"></div>
<div class="b" style="left:330.50px;top:160.50px;width:65.00px;height:15.00px;background:#efefef;"></div>
<div class="b" style="left:395.50px;top:160.50px;width:64.00px;height:15.00px;background:#efefef;"></div>
<div class="b" style="left:459.50px;top:160.50px;width:65.00px;height:15.00px;background:#efefef;"></div>
<div class="b" style="left:524.50px;top:160.50px;width:65.00px;height:15.00px;background:#efefef;"></div>
<div class="b" style="left:589.50px;top:160.50px;width:64.00px;height:15.00px;background:#efefef;"></div>
<div class="b" style="left:653.50px;top:160.50px;width:65.00px;height:15.00px;background:#efefef;"></div>
<div class="b" style="left:718.50px;top:160.50px;width:65.00px;height:15.00px;background:#efefef;"></div>
<div class="b" style="left:783.50px;top:160.50px;width:64.00px;height:15.00px;background:#efefef;"></div>
<div class="b" style="left:847.50px;top:160.50px;width:65.00px;height:15.00px;background:#efefef;"></div>
<div class="b" style="left:912.50px;top:160.50px;width:65.00px;height:15.00px;background:#efefef;"></div>
<div class="b" style="left:977.50px;top:160.50px;width:65.00px;height:15.00px;background:#efefef;"></div>
<div class="b" style="left:1042.50px;top:160.50px;width:64.00px;height:15.00px;background:#efefef;"></div>
<div class="b" style="left:1106.50px;top:160.50px;width:65.00px;height:15.00px;background:#efefef;"></div>
<div class="b" style="left:0.00px;top:174.50px;width:23.00px;height:1.00px;background:#e0e0e0;"></div>
<div class="b" style="left:23.00px;top:174.50px;width:1148.50px;height:1.00px;background:#e3e3e3;"></div>
<div class="b" style="left:0.00px;top:175.50px;width:23.00px;height:14.00px;background:#ececec;"></div>
<div class="b" style="left:23.00px;top:175.50px;width:178.50px;height:14.00px;background:#fff;"></div>
<div class="b" style="left:201.50px;top:175.50px;width:64.00px;height:14.00px;background:#efefef;"></div>
<div class="b" style="left:265.50px;top:175.50px;width:65.00px;height:14.00px;background:#efefef;"></div>
<div class="b" style="left:330.50px;top:175.50px;width:65.00px;height:14.00px;background:#efefef;"></div>
<div class="b" style="left:395.50px;top:175.50px;width:64.00px;height:14.00px;background:#efefef;"></div>
<div class="b" style="left:459.50px;top:175.50px;width:65.00px;height:14.00px;background:#efefef;"></div>
<div class="b" style="left:524.50px;top:175.50px;width:65.00px;height:14.00px;background:#efefef;"></div>
<div class="b" style="left:589.50px;top:175.50px;width:64.00px;height:14.00px;background:#efefef;"></div>
<div class="b" style="left:653.50px;top:175.50px;width:65.00px;height:14.00px;background:#efefef;"></div>
<div class="b" style="left:718.50px;top:175.50px;width:65.00px;height:14.00px;background:#efefef;"></div>
<div class="b" style="left:783.50px;top:175.50px;width:64.00px;height:14.00px;background:#efefef;"></div>
<div class="b" style="left:847.50px;top:175.50px;width:65.00px;height:14.00px;background:#efefef;"></div>
<div class="b" style="left:912.50px;top:175.50px;width:65.00px;height:14.00px;background:#efefef;"></div>
<div class="b" style="left:977.50px;top:175.50px;width:65.00px;height:14.00px;background:#efefef;"></div>
<div class="b" style="left:1042.50px;top:175.50px;width:64.00px;height:14.00px;background:#efefef;"></div>
<div class="b" style="left:1106.50px;top:175.50px;width:65.00px;height:14.00px;background:#efefef;"></div>
<div class="b" style="left:0.00px;top:188.50px;width:23.00px;height:1.00px;background:#e0e0e0;"></div>
<div class="b" style="left:23.00px;top:188.50px;width:1148.50px;height:1.00px;background:#e3e3e3;"></div>
<div class="b" style="left:0.00px;top:189.50px;width:23.00px;height:15.00px;background:#ececec;"></div>
<div class="b" style="left:23.00px;top:189.50px;width:178.50px;height:15.00px;background:#fff;"></div>
<div class="b" style="left:201.50px;top:189.50px;width:64.00px;height:15.00px;background:#efefef;"></div>
<div class="b" style="left:265.50px;top:189.50px;width:65.00px;height:15.00px;background:#fff;"></div>
<div class="b" style="left:330.50px;top:189.50px;width:65.00px;height:15.00px;background:#fff;"></div>
<div class="b" style="left:395.50px;top:189.50px;width:64.00px;height:15.00px;background:#fff;"></div>
<div class="b" style="left:459.50px;top:189.50px;width:65.00px;height:15.00px;background:#fff;"></div>
<div class="b" style="left:524.50px;top:189.50px;width:65.00px;height:15.00px;background:#fff;"></div>
<div class="b" style="left:589.50px;top:189.50px;width:64.00px;height:15.00px;background:#fff;"></div>
<div class="b" style="left:653.50px;top:189.50px;width:65.00px;height:15.00px;background:#fff;"></div>
<div class="b" style="left:718.50px;top:189.50px;width:65.00px;height:15.00px;background:#fff;"></div>
<div class="b" style="left:783.50px;top:189.50px;width:64.00px;height:15.00px;background:#fff;"></div>
<div class="b" style="left:847.50px;top:189.50px;width:65.00px;height:15.00px;background:#fff;"></div>
<div class="b" style="left:912.50px;top:189.50px;width:65.00px;height:15.00px;background:#fff;"></div>
<div class="b" style="left:977.50px;top:189.50px;width:65.00px;height:15.00px;background:#fff;"></div>
<div class="b" style="left:1042.50px;top:189.50px;width:64.00px;height:15.00px;background:#d0edfb;"></div>
<div class="b" style="left:1106.50px;top:189.50px;width:65.00px;height:15.00px;background:#d0edfb;"></div>
<div class="b" style="left:0.00px;top:203.50px;width:23.00px;height:1.00px;background:#e0e0e0;"></div>
<div class="b" style="left:23.00px;top:203.50px;width:1148.50px;height:1.00px;background:#e3e3e3;"></div>
<div class="b" style="left:0.00px;top:204.50px;width:23.00px;height:14.00px;background:#ececec;"></div>
<div class="b" style="left:23.00px;top:204.50px;width:178.50px;height:14.00px;background:#fff;"></div>
<div class="b" style="left:201.50px;top:204.50px;width:64.00px;height:14.00px;background:#efefef;"></div>
<div class="b" style="left:265.50px;top:204.50px;width:65.00px;height:14.00px;background:#fff;"></div>
<div class="b" style="left:330.50px;top:204.50px;width:65.00px;height:14.00px;background:#fff;"></div>
<div class="b" style="left:395.50px;top:204.50px;width:64.00px;height:14.00px;background:#fff;"></div>
<div class="b" style="left:459.50px;top:204.50px;width:65.00px;height:14.00px;background:#fff;"></div>
<div class="b" style="left:524.50px;top:204.50px;width:65.00px;height:14.00px;background:#fff;"></div>
<div class="b" style="left:589.50px;top:204.50px;width:64.00px;height:14.00px;background:#fff;"></div>
<div class="b" style="left:653.50px;top:204.50px;width:65.00px;height:14.00px;background:#fff;"></div>
<div class="b" style="left:718.50px;top:204.50px;width:65.00px;height:14.00px;background:#fff;"></div>
<div class="b" style="left:783.50px;top:204.50px;width:64.00px;height:14.00px;background:#fff;"></div>
<div class="b" style="left:847.50px;top:204.50px;width:65.00px;height:14.00px;background:#fff;"></div>
<div class="b" style="left:912.50px;top:204.50px;width:65.00px;height:14.00px;background:#fff;"></div>
<div class="b" style="left:977.50px;top:204.50px;width:65.00px;height:14.00px;background:#fff;"></div>
<div class="b" style="left:1042.50px;top:204.50px;width:64.00px;height:14.00px;background:#d0edfb;"></div>
<div class="b" style="left:1106.50px;top:204.50px;width:65.00px;height:14.00px;background:#d0edfb;"></div>
<div class="b" style="left:0.00px;top:217.50px;width:23.00px;height:1.00px;background:#e0e0e0;"></div>
<div class="b" style="left:23.00px;top:217.50px;width:1148.50px;height:1.00px;background:#e3e3e3;"></div>
<div class="b" style="left:22.00px;top:0.00px;width:1.00px;height:212.70px;background:#e0e0e0;"></div>
<div class="b" style="left:264.50px;top:0.00px;width:1.00px;height:212.70px;background:#e0e0e0;"></div>
<div class="b" style="left:329.50px;top:0.00px;width:1.00px;height:212.70px;background:#e0e0e0;"></div>
<div class="b" style="left:394.50px;top:0.00px;width:1.00px;height:212.70px;background:#e0e0e0;"></div>
<div class="b" style="left:458.50px;top:0.00px;width:1.00px;height:212.70px;background:#e0e0e0;"></div>
<div class="b" style="left:523.50px;top:0.00px;width:1.00px;height:212.70px;background:#e0e0e0;"></div>
<div class="b" style="left:588.50px;top:0.00px;width:1.00px;height:212.70px;background:#e0e0e0;"></div>
<div class="b" style="left:652.50px;top:0.00px;width:1.00px;height:212.70px;background:#e0e0e0;"></div>
<div class="b" style="left:717.50px;top:0.00px;width:1.00px;height:212.70px;background:#e0e0e0;"></div>
<div class="b" style="left:782.50px;top:0.00px;width:1.00px;height:212.70px;background:#e0e0e0;"></div>
<div class="b" style="left:846.50px;top:0.00px;width:1.00px;height:212.70px;background:#e0e0e0;"></div>
<div class="b" style="left:911.50px;top:0.00px;width:1.00px;height:212.70px;background:#e0e0e0;"></div>
<div class="b" style="left:976.50px;top:0.00px;width:1.00px;height:212.70px;background:#e0e0e0;"></div>
<div class="b" style="left:1041.50px;top:0.00px;width:1.00px;height:212.70px;background:#e0e0e0;"></div>
<div class="b" style="left:1105.50px;top:0.00px;width:1.00px;height:212.70px;background:#e0e0e0;"></div>
<div class="b" style="left:1170.50px;top:0.00px;width:1.00px;height:212.70px;background:#e0e0e0;"></div>
<div class="b" style="left:200.50px;top:0.00px;width:1.00px;height:212.70px;background:#a8a8a8;"></div>
<div class="t" style="left:-38.80px;width:100px;top:2.77px;font-size:9.6px;line-height:9.6px;text-align:center;transform:scaleX(0.88);transform-origin:50% 0;color:#555;">1</div>
<svg style="left:32.80px;top:6.00px" width="8" height="5"><path d="M0 0 L7 0 L3.5 4 Z" fill="#888"/></svg>
<div class="t" style="left:49.80px;top:2.77px;font-size:9.6px;line-height:9.6px;transform:scaleX(0.897);transform-origin:0 0;color:#555;">Product</div>
<div class="t" style="left:-38.80px;width:100px;top:17.32px;font-size:9.6px;line-height:9.6px;text-align:center;transform:scaleX(0.88);transform-origin:50% 0;color:#555;">2</div>
<svg style="left:49.00px;top:20.55px" width="8" height="5"><path d="M0 0 L7 0 L3.5 4 Z" fill="#888"/></svg>
<div class="t" style="left:65.90px;top:17.32px;font-size:9.6px;line-height:9.6px;transform:scaleX(0.897);transform-origin:0 0;color:#555;">Product A1</div>
<div class="t" style="left:-38.80px;width:100px;top:31.87px;font-size:9.6px;line-height:9.6px;text-align:center;transform:scaleX(0.88);transform-origin:50% 0;color:#555;">3</div>
<svg style="left:65.50px;top:35.10px" width="8" height="5"><path d="M0 0 L7 0 L3.5 4 Z" fill="#888"/></svg>
<div class="t" style="left:81.70px;top:31.87px;font-size:9.6px;line-height:9.6px;transform:scaleX(0.897);transform-origin:0 0;color:#555;">Customer</div>
<div class="t" style="left:-38.80px;width:100px;top:46.42px;font-size:9.6px;line-height:9.6px;text-align:center;transform:scaleX(0.88);transform-origin:50% 0;color:#555;">4</div>
<div class="t" style="left:98.10px;top:46.42px;font-size:9.6px;line-height:9.6px;transform:scaleX(0.897);transform-origin:0 0;color:#555;">Customer 1</div>
<div class="t" style="left:56.50px;width:200px;top:46.42px;font-size:9.6px;line-height:9.6px;text-align:right;transform:scaleX(0.88);transform-origin:100% 0;color:#2e8b3a;">1,435</div>
<div class="t" style="left:121.50px;width:200px;top:46.42px;font-size:9.6px;line-height:9.6px;text-align:right;transform:scaleX(0.88);transform-origin:100% 0;color:#444;">41</div>
<div class="t" style="left:186.50px;width:200px;top:46.42px;font-size:9.6px;line-height:9.6px;text-align:right;transform:scaleX(0.88);transform-origin:100% 0;color:#444;">47</div>
<div class="t" style="left:250.50px;width:200px;top:46.42px;font-size:9.6px;line-height:9.6px;text-align:right;transform:scaleX(0.88);transform-origin:100% 0;color:#444;">42</div>
<div class="t" style="left:315.50px;width:200px;top:46.42px;font-size:9.6px;line-height:9.6px;text-align:right;transform:scaleX(0.88);transform-origin:100% 0;color:#444;">39</div>
<div class="t" style="left:380.50px;width:200px;top:46.42px;font-size:9.6px;line-height:9.6px;text-align:right;transform:scaleX(0.88);transform-origin:100% 0;color:#444;">47</div>
<div class="t" style="left:444.50px;width:200px;top:46.42px;font-size:9.6px;line-height:9.6px;text-align:right;transform:scaleX(0.88);transform-origin:100% 0;color:#444;">42</div>
<div class="t" style="left:509.50px;width:200px;top:46.42px;font-size:9.6px;line-height:9.6px;text-align:right;transform:scaleX(0.88);transform-origin:100% 0;color:#444;">39</div>
<div class="t" style="left:574.50px;width:200px;top:46.42px;font-size:9.6px;line-height:9.6px;text-align:right;transform:scaleX(0.88);transform-origin:100% 0;color:#444;">154</div>
<div class="t" style="left:638.50px;width:200px;top:46.42px;font-size:9.6px;line-height:9.6px;text-align:right;transform:scaleX(0.88);transform-origin:100% 0;color:#444;">170</div>
<div class="t" style="left:703.50px;width:200px;top:46.42px;font-size:9.6px;line-height:9.6px;text-align:right;transform:scaleX(0.88);transform-origin:100% 0;color:#444;">187</div>
<div class="t" style="left:768.50px;width:200px;top:46.42px;font-size:9.6px;line-height:9.6px;text-align:right;transform:scaleX(0.88);transform-origin:100% 0;color:#444;">61</div>
<div class="t" style="left:833.50px;width:200px;top:46.42px;font-size:9.6px;line-height:9.6px;text-align:right;transform:scaleX(0.88);transform-origin:100% 0;color:#444;">55</div>
<div class="t" style="left:897.50px;width:200px;top:46.42px;font-size:9.6px;line-height:9.6px;text-align:right;transform:scaleX(0.88);transform-origin:100% 0;color:#444;">924</div>
<div class="t" style="left:962.50px;width:200px;top:46.42px;font-size:9.6px;line-height:9.6px;text-align:right;transform:scaleX(0.88);transform-origin:100% 0;color:#444;">1,828</div>
<div class="t" style="left:-38.80px;width:100px;top:60.97px;font-size:9.6px;line-height:9.6px;text-align:center;transform:scaleX(0.88);transform-origin:50% 0;color:#555;">5</div>
<div class="t" style="left:98.10px;top:60.97px;font-size:9.6px;line-height:9.6px;transform:scaleX(0.897);transform-origin:0 0;color:#555;">Customer 2</div>
<div class="t" style="left:56.50px;width:200px;top:60.97px;font-size:9.6px;line-height:9.6px;text-align:right;transform:scaleX(0.88);transform-origin:100% 0;color:#2e8b3a;">1,068</div>
<div class="t" style="left:121.50px;width:200px;top:60.97px;font-size:9.6px;line-height:9.6px;text-align:right;transform:scaleX(0.88);transform-origin:100% 0;color:#444;">91</div>
<div class="t" style="left:186.50px;width:200px;top:60.97px;font-size:9.6px;line-height:9.6px;text-align:right;transform:scaleX(0.88);transform-origin:100% 0;color:#444;">107</div>
<div class="t" style="left:250.50px;width:200px;top:60.97px;font-size:9.6px;line-height:9.6px;text-align:right;transform:scaleX(0.88);transform-origin:100% 0;color:#444;">97</div>
<div class="t" style="left:315.50px;width:200px;top:60.97px;font-size:9.6px;line-height:9.6px;text-align:right;transform:scaleX(0.88);transform-origin:100% 0;color:#444;">91</div>
<div class="t" style="left:380.50px;width:200px;top:60.97px;font-size:9.6px;line-height:9.6px;text-align:right;transform:scaleX(0.88);transform-origin:100% 0;color:#444;">107</div>
<div class="t" style="left:444.50px;width:200px;top:60.97px;font-size:9.6px;line-height:9.6px;text-align:right;transform:scaleX(0.88);transform-origin:100% 0;color:#444;">97</div>
<div class="t" style="left:509.50px;width:200px;top:60.97px;font-size:9.6px;line-height:9.6px;text-align:right;transform:scaleX(0.88);transform-origin:100% 0;color:#444;">91</div>
<div class="t" style="left:574.50px;width:200px;top:60.97px;font-size:9.6px;line-height:9.6px;text-align:right;transform:scaleX(0.88);transform-origin:100% 0;color:#444;">107</div>
<div class="t" style="left:638.50px;width:200px;top:60.97px;font-size:9.6px;line-height:9.6px;text-align:right;transform:scaleX(0.88);transform-origin:100% 0;color:#444;">97</div>
<div class="t" style="left:703.50px;width:200px;top:60.97px;font-size:9.6px;line-height:9.6px;text-align:right;transform:scaleX(0.88);transform-origin:100% 0;color:#444;">91</div>
<div class="t" style="left:768.50px;width:200px;top:60.97px;font-size:9.6px;line-height:9.6px;text-align:right;transform:scaleX(0.88);transform-origin:100% 0;color:#444;">107</div>
<div class="t" style="left:833.50px;width:200px;top:60.97px;font-size:9.6px;line-height:9.6px;text-align:right;transform:scaleX(0.88);transform-origin:100% 0;color:#444;">97</div>
<div class="t" style="left:897.50px;width:200px;top:60.97px;font-size:9.6px;line-height:9.6px;text-align:right;transform:scaleX(0.88);transform-origin:100% 0;color:#444;">1,179</div>
<div class="t" style="left:962.50px;width:200px;top:60.97px;font-size:9.6px;line-height:9.6px;text-align:right;transform:scaleX(0.88);transform-origin:100% 0;color:#444;">1,276</div>
<div class="t" style="left:-38.80px;width:100px;top:75.52px;font-size:9.6px;line-height:9.6px;text-align:center;transform:scaleX(0.88);transform-origin:50% 0;color:#555;">6</div>
<div class="t" style="left:98.10px;top:75.52px;font-size:9.6px;line-height:9.6px;transform:scaleX(0.897);transform-origin:0 0;color:#555;">Customer 3</div>
<div class="t" style="left:56.50px;width:200px;top:75.52px;font-size:9.6px;line-height:9.6px;text-align:right;transform:scaleX(0.88);transform-origin:100% 0;color:#2e8b3a;">1,586</div>
<div class="t" style="left:121.50px;width:200px;top:75.52px;font-size:9.6px;line-height:9.6px;text-align:right;transform:scaleX(0.88);transform-origin:100% 0;color:#444;">141</div>
<div class="t" style="left:186.50px;width:200px;top:75.52px;font-size:9.6px;line-height:9.6px;text-align:right;transform:scaleX(0.88);transform-origin:100% 0;color:#444;">167</div>
<div class="t" style="left:250.50px;width:200px;top:75.52px;font-size:9.6px;line-height:9.6px;text-align:right;transform:scaleX(0.88);transform-origin:100% 0;color:#444;">152</div>
<div class="t" style="left:315.50px;width:200px;top:75.52px;font-size:9.6px;line-height:9.6px;text-align:right;transform:scaleX(0.88);transform-origin:100% 0;color:#444;">141</div>
<div class="t" style="left:380.50px;width:200px;top:75.52px;font-size:9.6px;line-height:9.6px;text-align:right;transform:scaleX(0.88);transform-origin:100% 0;color:#444;">167</div>
<div class="t" style="left:444.50px;width:200px;top:75.52px;font-size:9.6px;line-height:9.6px;text-align:right;transform:scaleX(0.88);transform-origin:100% 0;color:#444;">152</div>
<div class="t" style="left:509.50px;width:200px;top:75.52px;font-size:9.6px;line-height:9.6px;text-align:right;transform:scaleX(0.88);transform-origin:100% 0;color:#444;">141</div>
<div class="t" style="left:574.50px;width:200px;top:75.52px;font-size:9.6px;line-height:9.6px;text-align:right;transform:scaleX(0.88);transform-origin:100% 0;color:#444;">167</div>
<div class="t" style="left:638.50px;width:200px;top:75.52px;font-size:9.6px;line-height:9.6px;text-align:right;transform:scaleX(0.88);transform-origin:100% 0;color:#444;">152</div>
<div class="t" style="left:703.50px;width:200px;top:75.52px;font-size:9.6px;line-height:9.6px;text-align:right;transform:scaleX(0.88);transform-origin:100% 0;color:#444;">141</div>
<div class="t" style="left:768.50px;width:200px;top:75.52px;font-size:9.6px;line-height:9.6px;text-align:right;transform:scaleX(0.88);transform-origin:100% 0;color:#444;">167</div>
<div class="t" style="left:833.50px;width:200px;top:75.52px;font-size:9.6px;line-height:9.6px;text-align:right;transform:scaleX(0.88);transform-origin:100% 0;color:#444;">152</div>
<div class="t" style="left:897.50px;width:200px;top:75.52px;font-size:9.6px;line-height:9.6px;text-align:right;transform:scaleX(0.88);transform-origin:100% 0;color:#444;">1,841</div>
<div class="t" style="left:962.50px;width:200px;top:75.52px;font-size:9.6px;line-height:9.6px;text-align:right;transform:scaleX(0.88);transform-origin:100% 0;color:#444;">1,992</div>
<div class="t" style="left:-38.80px;width:100px;top:90.07px;font-size:9.6px;line-height:9.6px;text-align:center;transform:scaleX(0.88);transform-origin:50% 0;color:#555;">7</div>
<div class="t" style="left:98.10px;top:90.07px;font-size:9.6px;line-height:9.6px;transform:scaleX(0.897);transform-origin:0 0;color:#555;">Customer 4</div>
<div class="t" style="left:56.50px;width:200px;top:90.07px;font-size:9.6px;line-height:9.6px;text-align:right;transform:scaleX(0.88);transform-origin:100% 0;color:#2e8b3a;">1,075</div>
<div class="t" style="left:121.50px;width:200px;top:90.07px;font-size:9.6px;line-height:9.6px;text-align:right;transform:scaleX(0.88);transform-origin:100% 0;color:#444;">97</div>
<div class="t" style="left:186.50px;width:200px;top:90.07px;font-size:9.6px;line-height:9.6px;text-align:right;transform:scaleX(0.88);transform-origin:100% 0;color:#444;">116</div>
<div class="t" style="left:250.50px;width:200px;top:90.07px;font-size:9.6px;line-height:9.6px;text-align:right;transform:scaleX(0.88);transform-origin:100% 0;color:#444;">104</div>
<div class="t" style="left:315.50px;width:200px;top:90.07px;font-size:9.6px;line-height:9.6px;text-align:right;transform:scaleX(0.88);transform-origin:100% 0;color:#444;">97</div>
<div class="t" style="left:380.50px;width:200px;top:90.07px;font-size:9.6px;line-height:9.6px;text-align:right;transform:scaleX(0.88);transform-origin:100% 0;color:#444;">116</div>
<div class="t" style="left:444.50px;width:200px;top:90.07px;font-size:9.6px;line-height:9.6px;text-align:right;transform:scaleX(0.88);transform-origin:100% 0;color:#444;">104</div>
<div class="t" style="left:509.50px;width:200px;top:90.07px;font-size:9.6px;line-height:9.6px;text-align:right;transform:scaleX(0.88);transform-origin:100% 0;color:#444;">97</div>
<div class="t" style="left:574.50px;width:200px;top:90.07px;font-size:9.6px;line-height:9.6px;text-align:right;transform:scaleX(0.88);transform-origin:100% 0;color:#444;">116</div>
<div class="t" style="left:638.50px;width:200px;top:90.07px;font-size:9.6px;line-height:9.6px;text-align:right;transform:scaleX(0.88);transform-origin:100% 0;color:#444;">104</div>
<div class="t" style="left:703.50px;width:200px;top:90.07px;font-size:9.6px;line-height:9.6px;text-align:right;transform:scaleX(0.88);transform-origin:100% 0;color:#444;">97</div>
<div class="t" style="left:768.50px;width:200px;top:90.07px;font-size:9.6px;line-height:9.6px;text-align:right;transform:scaleX(0.88);transform-origin:100% 0;color:#444;">116</div>
<div class="t" style="left:833.50px;width:200px;top:90.07px;font-size:9.6px;line-height:9.6px;text-align:right;transform:scaleX(0.88);transform-origin:100% 0;color:#444;">104</div>
<div class="t" style="left:897.50px;width:200px;top:90.07px;font-size:9.6px;line-height:9.6px;text-align:right;transform:scaleX(0.88);transform-origin:100% 0;color:#444;">1,268</div>
<div class="t" style="left:962.50px;width:200px;top:90.07px;font-size:9.6px;line-height:9.6px;text-align:right;transform:scaleX(0.88);transform-origin:100% 0;color:#444;">1,372</div>
<div class="t" style="left:-38.80px;width:100px;top:104.62px;font-size:9.6px;line-height:9.6px;text-align:center;transform:scaleX(0.88);transform-origin:50% 0;color:#555;">8</div>
<div class="t" style="left:98.10px;top:104.62px;font-size:9.6px;line-height:9.6px;transform:scaleX(0.897);transform-origin:0 0;color:#555;">Customer 5</div>
<div class="t" style="left:56.50px;width:200px;top:104.62px;font-size:9.6px;line-height:9.6px;text-align:right;transform:scaleX(0.88);transform-origin:100% 0;color:#2e8b3a;">1,394</div>
<div class="t" style="left:121.50px;width:200px;top:104.62px;font-size:9.6px;line-height:9.6px;text-align:right;transform:scaleX(0.88);transform-origin:100% 0;color:#444;">129</div>
<div class="t" style="left:186.50px;width:200px;top:104.62px;font-size:9.6px;line-height:9.6px;text-align:right;transform:scaleX(0.88);transform-origin:100% 0;color:#444;">154</div>
<div class="t" style="left:250.50px;width:200px;top:104.62px;font-size:9.6px;line-height:9.6px;text-align:right;transform:scaleX(0.88);transform-origin:100% 0;color:#444;">139</div>
<div class="t" style="left:315.50px;width:200px;top:104.62px;font-size:9.6px;line-height:9.6px;text-align:right;transform:scaleX(0.88);transform-origin:100% 0;color:#444;">129</div>
<div class="t" style="left:380.50px;width:200px;top:104.62px;font-size:9.6px;line-height:9.6px;text-align:right;transform:scaleX(0.88);transform-origin:100% 0;color:#444;">154</div>
<div class="t" style="left:444.50px;width:200px;top:104.62px;font-size:9.6px;line-height:9.6px;text-align:right;transform:scaleX(0.88);transform-origin:100% 0;color:#444;">139</div>
<div class="t" style="left:509.50px;width:200px;top:104.62px;font-size:9.6px;line-height:9.6px;text-align:right;transform:scaleX(0.88);transform-origin:100% 0;color:#444;">129</div>
<div class="t" style="left:574.50px;width:200px;top:104.62px;font-size:9.6px;line-height:9.6px;text-align:right;transform:scaleX(0.88);transform-origin:100% 0;color:#444;">154</div>
<div class="t" style="left:638.50px;width:200px;top:104.62px;font-size:9.6px;line-height:9.6px;text-align:right;transform:scaleX(0.88);transform-origin:100% 0;color:#444;">139</div>
<div class="t" style="left:703.50px;width:200px;top:104.62px;font-size:9.6px;line-height:9.6px;text-align:right;transform:scaleX(0.88);transform-origin:100% 0;color:#444;">129</div>
<div class="t" style="left:768.50px;width:200px;top:104.62px;font-size:9.6px;line-height:9.6px;text-align:right;transform:scaleX(0.88);transform-origin:100% 0;color:#444;">154</div>
<div class="t" style="left:833.50px;width:200px;top:104.62px;font-size:9.6px;line-height:9.6px;text-align:right;transform:scaleX(0.88);transform-origin:100% 0;color:#444;">139</div>
<div class="t" style="left:897.50px;width:200px;top:104.62px;font-size:9.6px;line-height:9.6px;text-align:right;transform:scaleX(0.88);transform-origin:100% 0;color:#444;">1,689</div>
<div class="t" style="left:962.50px;width:200px;top:104.62px;font-size:9.6px;line-height:9.6px;text-align:right;transform:scaleX(0.88);transform-origin:100% 0;color:#444;">1,828</div>
<div class="t" style="left:-38.80px;width:100px;top:119.17px;font-size:9.6px;line-height:9.6px;text-align:center;transform:scaleX(0.88);transform-origin:50% 0;color:#555;">9</div>
<div class="t" style="left:98.10px;top:119.17px;font-size:9.6px;line-height:9.6px;transform:scaleX(0.897);transform-origin:0 0;color:#555;">Customer 6</div>
<div class="t" style="left:56.50px;width:200px;top:119.17px;font-size:9.6px;line-height:9.6px;text-align:right;transform:scaleX(0.88);transform-origin:100% 0;color:#2e8b3a;">1,682</div>
<div class="t" style="left:121.50px;width:200px;top:119.17px;font-size:9.6px;line-height:9.6px;text-align:right;transform:scaleX(0.88);transform-origin:100% 0;color:#444;">141</div>
<div class="t" style="left:186.50px;width:200px;top:119.17px;font-size:9.6px;line-height:9.6px;text-align:right;transform:scaleX(0.88);transform-origin:100% 0;color:#444;">167</div>
<div class="t" style="left:250.50px;width:200px;top:119.17px;font-size:9.6px;line-height:9.6px;text-align:right;transform:scaleX(0.88);transform-origin:100% 0;color:#444;">152</div>
<div class="t" style="left:315.50px;width:200px;top:119.17px;font-size:9.6px;line-height:9.6px;text-align:right;transform:scaleX(0.88);transform-origin:100% 0;color:#444;">141</div>
<div class="t" style="left:380.50px;width:200px;top:119.17px;font-size:9.6px;line-height:9.6px;text-align:right;transform:scaleX(0.88);transform-origin:100% 0;color:#444;">167</div>
<div class="t" style="left:444.50px;width:200px;top:119.17px;font-size:9.6px;line-height:9.6px;text-align:right;transform:scaleX(0.88);transform-origin:100% 0;color:#444;">152</div>
<div class="t" style="left:509.50px;width:200px;top:119.17px;font-size:9.6px;line-height:9.6px;text-align:right;transform:scaleX(0.88);transform-origin:100% 0;color:#444;">141</div>
<div class="t" style="left:574.50px;width:200px;top:119.17px;font-size:9.6px;line-height:9.6px;text-align:right;transform:scaleX(0.88);transform-origin:100% 0;color:#444;">167</div>
<div class="t" style="left:638.50px;width:200px;top:119.17px;font-size:9.6px;line-height:9.6px;text-align:right;transform:scaleX(0.88);transform-origin:100% 0;color:#444;">152</div>
<div class="t" style="left:703.50px;width:200px;top:119.17px;font-size:9.6px;line-height:9.6px;text-align:right;transform:scaleX(0.88);transform-origin:100% 0;color:#444;">141</div>
<div class="t" style="left:768.50px;width:200px;top:119.17px;font-size:9.6px;line-height:9.6px;text-align:right;transform:scaleX(0.88);transform-origin:100% 0;color:#444;">167</div>
<div class="t" style="left:833.50px;width:200px;top:119.17px;font-size:9.6px;line-height:9.6px;text-align:right;transform:scaleX(0.88);transform-origin:100% 0;color:#444;">152</div>
<div class="t" style="left:897.50px;width:200px;top:119.17px;font-size:9.6px;line-height:9.6px;text-align:right;transform:scaleX(0.88);transform-origin:100% 0;color:#444;">1,841</div>
<div class="t" style="left:962.50px;width:200px;top:119.17px;font-size:9.6px;line-height:9.6px;text-align:right;transform:scaleX(0.88);transform-origin:100% 0;color:#444;">1,992</div>
<div class="t" style="left:-38.80px;width:100px;top:133.72px;font-size:9.6px;line-height:9.6px;text-align:center;transform:scaleX(0.88);transform-origin:50% 0;color:#555;">10</div>
<div class="t" style="left:98.50px;top:133.72px;font-size:9.6px;line-height:9.6px;transform:scaleX(0.897);transform-origin:0 0;color:#555;">Total</div>
<div class="t" style="left:56.50px;width:200px;top:133.72px;font-size:9.6px;line-height:9.6px;text-align:right;transform:scaleX(0.88);transform-origin:100% 0;color:#2e8b3a;font-weight:bold;">8,240</div>
<div class="t" style="left:121.50px;width:200px;top:133.72px;font-size:9.6px;line-height:9.6px;text-align:right;transform:scaleX(0.88);transform-origin:100% 0;color:#444;font-weight:bold;">640</div>
<div class="t" style="left:186.50px;width:200px;top:133.72px;font-size:9.6px;line-height:9.6px;text-align:right;transform:scaleX(0.88);transform-origin:100% 0;color:#444;font-weight:bold;">758</div>
<div class="t" style="left:250.50px;width:200px;top:133.72px;font-size:9.6px;line-height:9.6px;text-align:right;transform:scaleX(0.88);transform-origin:100% 0;color:#444;font-weight:bold;">685</div>
<div class="t" style="left:315.50px;width:200px;top:133.72px;font-size:9.6px;line-height:9.6px;text-align:right;transform:scaleX(0.88);transform-origin:100% 0;color:#444;font-weight:bold;">639</div>
<div class="t" style="left:380.50px;width:200px;top:133.72px;font-size:9.6px;line-height:9.6px;text-align:right;transform:scaleX(0.88);transform-origin:100% 0;color:#444;font-weight:bold;">758</div>
<div class="t" style="left:444.50px;width:200px;top:133.72px;font-size:9.6px;line-height:9.6px;text-align:right;transform:scaleX(0.88);transform-origin:100% 0;color:#444;font-weight:bold;">685</div>
<div class="t" style="left:509.50px;width:200px;top:133.72px;font-size:9.6px;line-height:9.6px;text-align:right;transform:scaleX(0.88);transform-origin:100% 0;color:#444;font-weight:bold;">639</div>
<div class="t" style="left:574.50px;width:200px;top:133.72px;font-size:9.6px;line-height:9.6px;text-align:right;transform:scaleX(0.88);transform-origin:100% 0;color:#444;font-weight:bold;">866</div>
<div class="t" style="left:638.50px;width:200px;top:133.72px;font-size:9.6px;line-height:9.6px;text-align:right;transform:scaleX(0.88);transform-origin:100% 0;color:#444;font-weight:bold;">813</div>
<div class="t" style="left:703.50px;width:200px;top:133.72px;font-size:9.6px;line-height:9.6px;text-align:right;transform:scaleX(0.88);transform-origin:100% 0;color:#444;font-weight:bold;">786</div>
<div class="t" style="left:768.50px;width:200px;top:133.72px;font-size:9.6px;line-height:9.6px;text-align:right;transform:scaleX(0.88);transform-origin:100% 0;color:#444;font-weight:bold;">772</div>
<div class="t" style="left:833.50px;width:200px;top:133.72px;font-size:9.6px;line-height:9.6px;text-align:right;transform:scaleX(0.88);transform-origin:100% 0;color:#444;font-weight:bold;">698</div>
<div class="t" style="left:897.50px;width:200px;top:133.72px;font-size:9.6px;line-height:9.6px;text-align:right;transform:scaleX(0.88);transform-origin:100% 0;color:#444;font-weight:bold;">8,741</div>
<div class="t" style="left:962.50px;width:200px;top:133.72px;font-size:9.6px;line-height:9.6px;text-align:right;transform:scaleX(0.88);transform-origin:100% 0;color:#444;font-weight:bold;">10,288</div>
<div class="t" style="left:-38.80px;width:100px;top:148.27px;font-size:9.6px;line-height:9.6px;text-align:center;transform:scaleX(0.88);transform-origin:50% 0;color:#555;">11</div>
<div class="t" style="left:82.20px;top:148.27px;font-size:9.6px;line-height:9.6px;transform:scaleX(0.897);transform-origin:0 0;color:#555;">Total</div>
<div class="t" style="left:56.50px;width:200px;top:148.27px;font-size:9.6px;line-height:9.6px;text-align:right;transform:scaleX(0.88);transform-origin:100% 0;color:#2e8b3a;font-weight:bold;">8,240</div>
<div class="t" style="left:121.50px;width:200px;top:148.27px;font-size:9.6px;line-height:9.6px;text-align:right;transform:scaleX(0.88);transform-origin:100% 0;color:#444;font-weight:bold;">640</div>
<div class="t" style="left:186.50px;width:200px;top:148.27px;font-size:9.6px;line-height:9.6px;text-align:right;transform:scaleX(0.88);transform-origin:100% 0;color:#444;font-weight:bold;">758</div>
<div class="t" style="left:250.50px;width:200px;top:148.27px;font-size:9.6px;line-height:9.6px;text-align:right;transform:scaleX(0.88);transform-origin:100% 0;color:#444;font-weight:bold;">685</div>
<div class="t" style="left:315.50px;width:200px;top:148.27px;font-size:9.6px;line-height:9.6px;text-align:right;transform:scaleX(0.88);transform-origin:100% 0;color:#444;font-weight:bold;">639</div>
<div class="t" style="left:380.50px;width:200px;top:148.27px;font-size:9.6px;line-height:9.6px;text-align:right;transform:scaleX(0.88);transform-origin:100% 0;color:#444;font-weight:bold;">758</div>
<div class="t" style="left:444.50px;width:200px;top:148.27px;font-size:9.6px;line-height:9.6px;text-align:right;transform:scaleX(0.88);transform-origin:100% 0;color:#444;font-weight:bold;">685</div>
<div class="t" style="left:509.50px;width:200px;top:148.27px;font-size:9.6px;line-height:9.6px;text-align:right;transform:scaleX(0.88);transform-origin:100% 0;color:#444;font-weight:bold;">639</div>
<div class="t" style="left:574.50px;width:200px;top:148.27px;font-size:9.6px;line-height:9.6px;text-align:right;transform:scaleX(0.88);transform-origin:100% 0;color:#444;font-weight:bold;">866</div>
<div class="t" style="left:638.50px;width:200px;top:148.27px;font-size:9.6px;line-height:9.6px;text-align:right;transform:scaleX(0.88);transform-origin:100% 0;color:#444;font-weight:bold;">813</div>
<div class="t" style="left:703.50px;width:200px;top:148.27px;font-size:9.6px;line-height:9.6px;text-align:right;transform:scaleX(0.88);transform-origin:100% 0;color:#444;font-weight:bold;">786</div>
<div class="t" style="left:768.50px;width:200px;top:148.27px;font-size:9.6px;line-height:9.6px;text-align:right;transform:scaleX(0.88);transform-origin:100% 0;color:#444;font-weight:bold;">772</div>
<div class="t" style="left:833.50px;width:200px;top:148.27px;font-size:9.6px;line-height:9.6px;text-align:right;transform:scaleX(0.88);transform-origin:100% 0;color:#444;font-weight:bold;">698</div>
<div class="t" style="left:897.50px;width:200px;top:148.27px;font-size:9.6px;line-height:9.6px;text-align:right;transform:scaleX(0.88);transform-origin:100% 0;color:#444;font-weight:bold;">8,741</div>
<div class="t" style="left:962.50px;width:200px;top:148.27px;font-size:9.6px;line-height:9.6px;text-align:right;transform:scaleX(0.88);transform-origin:100% 0;color:#444;font-weight:bold;">10,288</div>
<div class="t" style="left:-38.80px;width:100px;top:162.82px;font-size:9.6px;line-height:9.6px;text-align:center;transform:scaleX(0.88);transform-origin:50% 0;color:#555;">12</div>
<svg style="left:49.00px;top:166.05px" width="8" height="5"><path d="M0 0 L7 0 L3.5 4 Z" fill="#888"/></svg>
<div class="t" style="left:65.90px;top:162.82px;font-size:9.6px;line-height:9.6px;transform:scaleX(0.897);transform-origin:0 0;color:#555;">Product A2</div>
<div class="t" style="left:-38.80px;width:100px;top:177.37px;font-size:9.6px;line-height:9.6px;text-align:center;transform:scaleX(0.88);transform-origin:50% 0;color:#555;">13</div>
<svg style="left:65.50px;top:180.60px" width="8" height="5"><path d="M0 0 L7 0 L3.5 4 Z" fill="#888"/></svg>
<div class="t" style="left:81.70px;top:177.37px;font-size:9.6px;line-height:9.6px;transform:scaleX(0.897);transform-origin:0 0;color:#555;">Customer</div>
<div class="t" style="left:-38.80px;width:100px;top:191.92px;font-size:9.6px;line-height:9.6px;text-align:center;transform:scaleX(0.88);transform-origin:50% 0;color:#555;">14</div>
<div class="t" style="left:98.10px;top:191.92px;font-size:9.6px;line-height:9.6px;transform:scaleX(0.897);transform-origin:0 0;color:#555;">Customer 1</div>
<div class="t" style="left:56.50px;width:200px;top:191.92px;font-size:9.6px;line-height:9.6px;text-align:right;transform:scaleX(0.88);transform-origin:100% 0;color:#2e8b3a;">1,523</div>
<div class="t" style="left:121.50px;width:200px;top:191.92px;font-size:9.6px;line-height:9.6px;text-align:right;transform:scaleX(0.88);transform-origin:100% 0;color:#444;">167</div>
<div class="t" style="left:186.50px;width:200px;top:191.92px;font-size:9.6px;line-height:9.6px;text-align:right;transform:scaleX(0.88);transform-origin:100% 0;color:#444;">167</div>
<div class="t" style="left:250.50px;width:200px;top:191.92px;font-size:9.6px;line-height:9.6px;text-align:right;transform:scaleX(0.88);transform-origin:100% 0;color:#444;">167</div>
<div class="t" style="left:315.50px;width:200px;top:191.92px;font-size:9.6px;line-height:9.6px;text-align:right;transform:scaleX(0.88);transform-origin:100% 0;color:#444;">167</div>
<div class="t" style="left:380.50px;width:200px;top:191.92px;font-size:9.6px;line-height:9.6px;text-align:right;transform:scaleX(0.88);transform-origin:100% 0;color:#444;">167</div>
<div class="t" style="left:444.50px;width:200px;top:191.92px;font-size:9.6px;line-height:9.6px;text-align:right;transform:scaleX(0.88);transform-origin:100% 0;color:#444;">167</div>
<div class="t" style="left:509.50px;width:200px;top:191.92px;font-size:9.6px;line-height:9.6px;text-align:right;transform:scaleX(0.88);transform-origin:100% 0;color:#444;">167</div>
<div class="t" style="left:574.50px;width:200px;top:191.92px;font-size:9.6px;line-height:9.6px;text-align:right;transform:scaleX(0.88);transform-origin:100% 0;color:#444;">167</div>
<div class="t" style="left:638.50px;width:200px;top:191.92px;font-size:9.6px;line-height:9.6px;text-align:right;transform:scaleX(0.88);transform-origin:100% 0;color:#444;">167</div>
<div class="t" style="left:703.50px;width:200px;top:191.92px;font-size:9.6px;line-height:9.6px;text-align:right;transform:scaleX(0.88);transform-origin:100% 0;color:#444;">167</div>
<div class="t" style="left:768.50px;width:200px;top:191.92px;font-size:9.6px;line-height:9.6px;text-align:right;transform:scaleX(0.88);transform-origin:100% 0;color:#444;">167</div>
<div class="t" style="left:833.50px;width:200px;top:191.92px;font-size:9.6px;line-height:9.6px;text-align:right;transform:scaleX(0.88);transform-origin:100% 0;color:#444;">167</div>
<div class="t" style="left:897.50px;width:200px;top:191.92px;font-size:9.6px;line-height:9.6px;text-align:right;transform:scaleX(0.88);transform-origin:100% 0;color:#444;">2,004</div>
<div class="t" style="left:962.50px;width:200px;top:191.92px;font-size:9.6px;line-height:9.6px;text-align:right;transform:scaleX(0.88);transform-origin:100% 0;color:#444;">2,004</div>
<div class="t" style="left:-38.80px;width:100px;top:206.47px;font-size:9.6px;line-height:9.6px;text-align:center;transform:scaleX(0.88);transform-origin:50% 0;color:#555;">15</div>
<div class="t" style="left:98.10px;top:206.47px;font-size:9.6px;line-height:9.6px;transform:scaleX(0.897);transform-origin:0 0;color:#555;">Customer 2</div>
<div class="t" style="left:56.50px;width:200px;top:206.47px;font-size:9.6px;line-height:9.6px;text-align:right;transform:scaleX(0.88);transform-origin:100% 0;color:#2e8b3a;">1,170</div>
<div class="t" style="left:121.50px;width:200px;top:206.47px;font-size:9.6px;line-height:9.6px;text-align:right;transform:scaleX(0.88);transform-origin:100% 0;color:#444;">116</div>
<div class="t" style="left:186.50px;width:200px;top:206.47px;font-size:9.6px;line-height:9.6px;text-align:right;transform:scaleX(0.88);transform-origin:100% 0;color:#444;">116</div>
<div class="t" style="left:250.50px;width:200px;top:206.47px;font-size:9.6px;line-height:9.6px;text-align:right;transform:scaleX(0.88);transform-origin:100% 0;color:#444;">116</div>
<div class="t" style="left:315.50px;width:200px;top:206.47px;font-size:9.6px;line-height:9.6px;text-align:right;transform:scaleX(0.88);transform-origin:100% 0;color:#444;">116</div>
<div class="t" style="left:380.50px;width:200px;top:206.47px;font-size:9.6px;line-height:9.6px;text-align:right;transform:scaleX(0.88);transform-origin:100% 0;color:#444;">116</div>
<div class="t" style="left:444.50px;width:200px;top:206.47px;font-size:9.6px;line-height:9.6px;text-align:right;transform:scaleX(0.88);transform-origin:100% 0;color:#444;">116</div>
<div class="t" style="left:509.50px;width:200px;top:206.47px;font-size:9.6px;line-height:9.6px;text-align:right;transform:scaleX(0.88);transform-origin:100% 0;color:#444;">116</div>
<div class="t" style="left:574.50px;width:200px;top:206.47px;font-size:9.6px;line-height:9.6px;text-align:right;transform:scaleX(0.88);transform-origin:100% 0;color:#444;">116</div>
<div class="t" style="left:638.50px;width:200px;top:206.47px;font-size:9.6px;line-height:9.6px;text-align:right;transform:scaleX(0.88);transform-origin:100% 0;color:#444;">116</div>
<div class="t" style="left:703.50px;width:200px;top:206.47px;font-size:9.6px;line-height:9.6px;text-align:right;transform:scaleX(0.88);transform-origin:100% 0;color:#444;">116</div>
<div class="t" style="left:768.50px;width:200px;top:206.47px;font-size:9.6px;line-height:9.6px;text-align:right;transform:scaleX(0.88);transform-origin:100% 0;color:#444;">116</div>
<div class="t" style="left:833.50px;width:200px;top:206.47px;font-size:9.6px;line-height:9.6px;text-align:right;transform:scaleX(0.88);transform-origin:100% 0;color:#444;">116</div>
<div class="t" style="left:897.50px;width:200px;top:206.47px;font-size:9.6px;line-height:9.6px;text-align:right;transform:scaleX(0.88);transform-origin:100% 0;color:#444;">1,392</div>
<div class="t" style="left:962.50px;width:200px;top:206.47px;font-size:9.6px;line-height:9.6px;text-align:right;transform:scaleX(0.88);transform-origin:100% 0;color:#444;">1,392</div>
</div>
<div class="b" style="left:260.50px;top:250.00px;width:1245.50px;height:2.00px;background:#d6d6d6;"></div>
<div class="b" style="left:1506.00px;top:231.00px;width:15.00px;height:232.20px;background:#f4f4f4;"></div>
<svg style="left:1512.5px;top:235px" width="8" height="6"><path d="M0 5 L7 5 L3.5 0.5 Z" fill="#999"/></svg>
<div class="b" style="left:1511.00px;top:244.80px;width:10.00px;height:22.50px;background:#bdbdbd;"></div>
<svg style="left:1512px;top:452px" width="8" height="6"><path d="M0 0.5 L7 0.5 L3.5 5 Z" fill="#333"/></svg>
<div class="b" style="left:260.50px;top:463.20px;width:1245.50px;height:12.80px;background:#ececec;"></div>
<div class="b" style="left:461.00px;top:463.20px;width:1.00px;height:12.80px;background:#a8a8a8;"></div>
<svg style="left:0;top:0" width="1536" height="686"><path d="M268.5 466.5 L268.5 472.5 L265 469.5 Z M453.5 466.5 L453.5 472.5 L457 469.5 Z M470.5 466.5 L470.5 472.5 L467 469.5 Z M1497.5 466.5 L1497.5 472.5 L1501 469.5 Z" fill="#a0a0a0"/></svg>
<div class="b" style="left:1506.00px;top:463.20px;width:19.00px;height:12.80px;background:#f6f6f6;"></div>
<div class="b" style="left:260.50px;top:476.00px;width:1264.50px;height:19.00px;background:#f6f6f6;"></div>
<div class="t" style="right:21.20px;top:480.34px;font-size:10px;line-height:10px;text-align:right;transform:scaleX(0.94);transform-origin:100% 0;color:#5f5f5f;">All currency values shown in AUD - Australia, Dollars</div>
<div class="b" style="left:259.00px;top:512.00px;width:1266.50px;height:188.00px;background:#fff;border:1px solid #e9e9eb;"></div>
<div class="t" style="left:272.80px;top:523.81px;font-size:11.8px;line-height:11.8px;transform:scaleX(0.938);transform-origin:0 0;color:#555;">Product Net Revenue Plan vs. Target</div>
<svg style="left:0px;top:0px" width="1536" height="686"><path d="M334.5 559 L334.5 667.5" stroke="#e6e6e6" stroke-width="1"/><path d="M326.4 557 L334.5 557" stroke="#a8a8a8" stroke-width="1"/><path d="M326.4 608.5 L334.5 608.5" stroke="#a8a8a8" stroke-width="1"/><path d="M326.4 658.5 L334.5 658.5" stroke="#a8a8a8" stroke-width="1"/><path d="M334.5 658.8 L1511 658.8" stroke="#eeeeee" stroke-width="1"/><path d="M433.0 659 L433.0 667" stroke="#bdbdbd" stroke-width="1"/><path d="M530.9 659 L530.9 667" stroke="#bdbdbd" stroke-width="1"/><path d="M628.8 659 L628.8 667" stroke="#bdbdbd" stroke-width="1"/><path d="M726.7 659 L726.7 667" stroke="#bdbdbd" stroke-width="1"/><path d="M824.6 659 L824.6 667" stroke="#bdbdbd" stroke-width="1"/><path d="M922.5 659 L922.5 667" stroke="#bdbdbd" stroke-width="1"/><path d="M1020.4 659 L1020.4 667" stroke="#bdbdbd" stroke-width="1"/><path d="M1118.3 659 L1118.3 667" stroke="#bdbdbd" stroke-width="1"/><path d="M1216.2 659 L1216.2 667" stroke="#bdbdbd" stroke-width="1"/><path d="M1314.1 659 L1314.1 667" stroke="#bdbdbd" stroke-width="1"/><path d="M1412.0 659 L1412.0 667" stroke="#bdbdbd" stroke-width="1"/><path d="M1509.9 659 L1509.9 667" stroke="#bdbdbd" stroke-width="1"/><rect x="360.8" y="623.7" width="47" height="35.3" fill="#1f7331"/><rect x="458.1" y="608.4" width="47" height="50.6" fill="#1f7331"/><rect x="556.1" y="591.8" width="47" height="67.2" fill="#1f7331"/><rect x="654.4" y="618.2" width="47" height="40.8" fill="#1f7331"/><rect x="751.7" y="602.1" width="47" height="56.9" fill="#1f7331"/><rect x="849.8" y="585.1" width="47" height="73.9" fill="#1f7331"/><rect x="948.0" y="611.1" width="47" height="47.9" fill="#1f7331"/><rect x="1045.4" y="589.2" width="47" height="69.8" fill="#1f7331"/><rect x="1143.9" y="571.5" width="47" height="87.5" fill="#1f7331"/><rect x="1241.8" y="590" width="47" height="69.0" fill="#1f7331"/><rect x="1339.2" y="586" width="47" height="73.0" fill="#1f7331"/><rect x="1437.4" y="569.5" width="47" height="89.5" fill="#1f7331"/><polyline points="384.3,647.1 481.6,624.7 579.6,604.8 677.9,640 775.2,617.7 873.3,604.8 971.5,631.3 1068.9,619.3 1167.4,597.9 1265.3,614.4 1362.7,610.7 1460.9,593.4" fill="none" stroke="#f0221c" stroke-width="2.9" stroke-linejoin="round"/><circle cx="384.3" cy="647.1" r="3.1" fill="#e8201a" stroke="#fbe0e0" stroke-width="1"/><circle cx="481.6" cy="624.7" r="3.1" fill="#e8201a" stroke="#fbe0e0" stroke-width="1"/><circle cx="579.6" cy="604.8" r="3.1" fill="#e8201a" stroke="#fbe0e0" stroke-width="1"/><circle cx="677.9" cy="640" r="3.1" fill="#e8201a" stroke="#fbe0e0" stroke-width="1"/><circle cx="775.2" cy="617.7" r="3.1" fill="#e8201a" stroke="#fbe0e0" stroke-width="1"/><circle cx="873.3" cy="604.8" r="3.1" fill="#e8201a" stroke="#fbe0e0" stroke-width="1"/><circle cx="971.5" cy="631.3" r="3.1" fill="#e8201a" stroke="#fbe0e0" stroke-width="1"/><circle cx="1068.9" cy="619.3" r="3.1" fill="#e8201a" stroke="#fbe0e0" stroke-width="1"/><circle cx="1167.4" cy="597.9" r="3.1" fill="#e8201a" stroke="#fbe0e0" stroke-width="1"/><circle cx="1265.3" cy="614.4" r="3.1" fill="#e8201a" stroke="#fbe0e0" stroke-width="1"/><circle cx="1362.7" cy="610.7" r="3.1" fill="#e8201a" stroke="#fbe0e0" stroke-width="1"/><circle cx="1460.9" cy="593.4" r="3.1" fill="#e8201a" stroke="#fbe0e0" stroke-width="1"/></svg>
<div class="t" style="left:234.30px;width:300px;text-align:center;top:667.15px;font-size:14px;line-height:14px;transform:scaleX(0.915);transform-origin:50% 0;color:#777;">Jan 2020</div>
<div class="t" style="left:331.60px;width:300px;text-align:center;top:667.15px;font-size:14px;line-height:14px;transform:scaleX(0.915);transform-origin:50% 0;color:#777;">Feb 2020</div>
<div class="t" style="left:429.60px;width:300px;text-align:center;top:667.15px;font-size:14px;line-height:14px;transform:scaleX(0.915);transform-origin:50% 0;color:#777;">Mar 2020</div>
<div class="t" style="left:527.90px;width:300px;text-align:center;top:667.15px;font-size:14px;line-height:14px;transform:scaleX(0.915);transform-origin:50% 0;color:#777;">Apr 2020</div>
<div class="t" style="left:625.20px;width:300px;text-align:center;top:667.15px;font-size:14px;line-height:14px;transform:scaleX(0.915);transform-origin:50% 0;color:#777;">May 2020</div>
<div class="t" style="left:723.30px;width:300px;text-align:center;top:667.15px;font-size:14px;line-height:14px;transform:scaleX(0.915);transform-origin:50% 0;color:#777;">Jun 2020</div>
<div class="t" style="left:821.50px;width:300px;text-align:center;top:667.15px;font-size:14px;line-height:14px;transform:scaleX(0.915);transform-origin:50% 0;color:#777;">Jul 2020</div>
<div class="t" style="left:918.90px;width:300px;text-align:center;top:667.15px;font-size:14px;line-height:14px;transform:scaleX(0.915);transform-origin:50% 0;color:#777;">Aug 2020</div>
<div class="t" style="left:1017.40px;width:300px;text-align:center;top:667.15px;font-size:14px;line-height:14px;transform:scaleX(0.915);transform-origin:50% 0;color:#777;">Sep 2020</div>
<div class="t" style="left:1115.30px;width:300px;text-align:center;top:667.15px;font-size:14px;line-height:14px;transform:scaleX(0.915);transform-origin:50% 0;color:#777;">Oct 2020</div>
<div class="t" style="left:1212.70px;width:300px;text-align:center;top:667.15px;font-size:14px;line-height:14px;transform:scaleX(0.915);transform-origin:50% 0;color:#777;">Nov 2020</div>
<div class="t" style="left:1310.90px;width:300px;text-align:center;top:667.15px;font-size:14px;line-height:14px;transform:scaleX(0.915);transform-origin:50% 0;color:#777;">Dec 2020</div>
<div class="t" style="right:1214.00px;top:552.70px;font-size:13px;line-height:13px;text-align:right;color:#777;">600</div>
<div class="t" style="right:1214.00px;top:602.50px;font-size:13px;line-height:13px;text-align:right;color:#777;">500</div>
<div class="t" style="right:1214.00px;top:653.50px;font-size:13px;line-height:13px;text-align:right;color:#777;">400</div>
<div class="t" style="left:256px;top:600.5px;width:60px;text-align:center;font-size:12.4px;line-height:14px;color:#777;transform:rotate(-90deg);">$,000</div>
<svg style="left:0;top:0" width="1536" height="686"><path d="M806.3 363.3 L808.4 363.3 L809.4 364.3 L810.4 363.3 L812.5 363.3 M809.4 364.3 L809.4 374.5 M806.3 375.4 L808.4 375.4 L809.4 374.5 L810.4 375.4 L812.5 375.4" stroke="#333" stroke-width="1.1" fill="none"/></svg>
<div class="b" style="left:1533.00px;top:72.00px;width:3.00px;height:614.00px;background:#f9f9f9;"></div>
<div class="b" style="left:1535.00px;top:86.00px;width:1.00px;height:472.00px;background:#c8c8c8;"></div>
</body></html>
